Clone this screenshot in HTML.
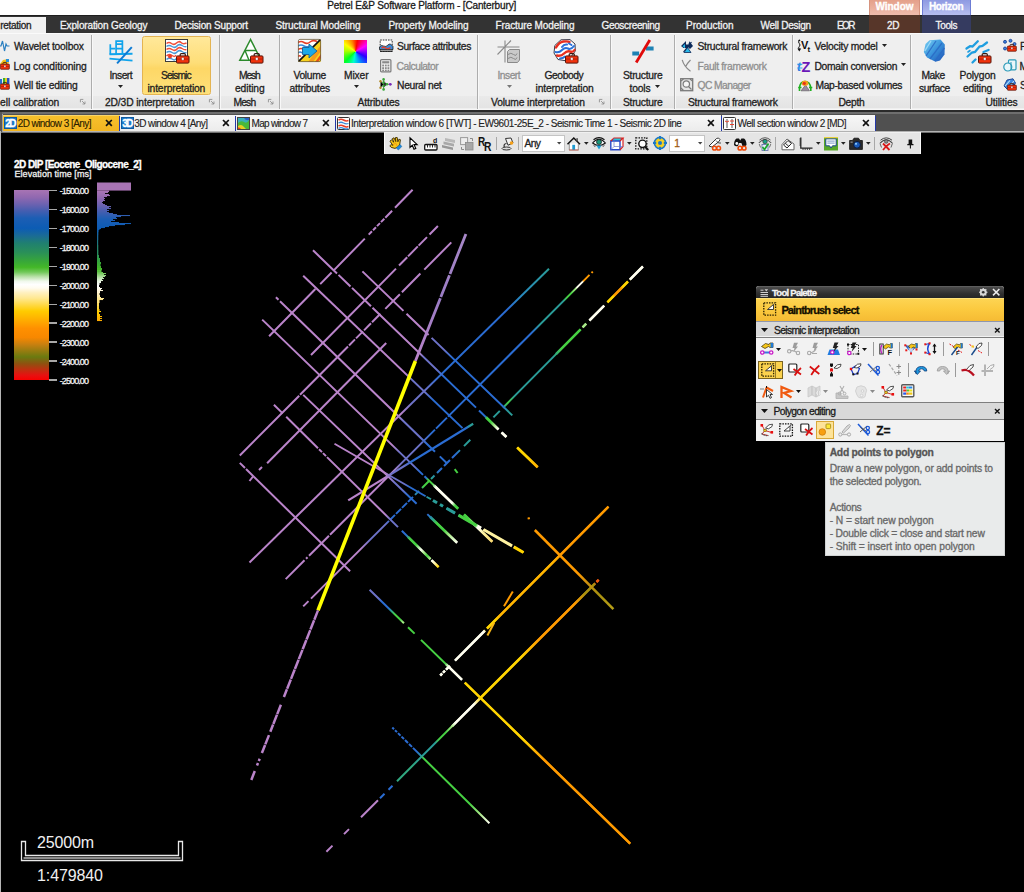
<!DOCTYPE html>
<html>
<head>
<meta charset="utf-8">
<title>Petrel</title>
<style>
*{box-sizing:border-box;margin:0;padding:0}
html,body{width:1024px;height:892px;overflow:hidden;background:#000;font-family:"Liberation Sans",sans-serif;}
body{position:relative}
.abs{position:absolute}
.t{position:absolute;white-space:nowrap;line-height:1;-webkit-text-stroke:0.3px currentColor}
svg{overflow:visible}
</style>
</head>
<body>
<div class="abs" style="left:0px;top:0px;width:1024px;height:15px;background:#fff;"></div>
<div class="t" style="left:327.3px;top:1px;font-size:10px;color:#1a1a1a;letter-spacing:-0.141px;">Petrel E&amp;P Software Platform - [Canterbury]</div>
<div class="abs" style="left:869.2px;top:0px;width:51px;height:15.2px;background:linear-gradient(#e4a08a,#f0bcac);border-left:1px solid #d6937e;border-right:1px solid #d6937e"></div>
<div class="abs" style="left:921.6px;top:0px;width:49.2px;height:15.2px;background:linear-gradient(#8e9ae2,#b6bef0);border-left:1px solid #6c7cd4;border-right:1px solid #6c7cd4"></div>
<div class="t" style="left:875.5px;top:2px;font-size:10px;color:#fff;font-weight:bold;letter-spacing:-0.048px;">Window</div>
<div class="t" style="left:929.0px;top:2px;font-size:10px;color:#fff;font-weight:bold;letter-spacing:-0.454px;">Horizon</div>
<div class="abs" style="left:0px;top:15px;width:1024px;height:18.3px;background:#333333;"></div>
<div class="abs" style="left:0px;top:15px;width:1024px;height:1px;background:#1e1e1e;"></div>
<div class="abs" style="left:0px;top:16.5px;width:45.6px;height:18px;background:#f0f0f0;"></div>
<div class="abs" style="left:869.2px;top:15.2px;width:51px;height:18.1px;background:#573629;"></div>
<div class="abs" style="left:921.6px;top:15.2px;width:49.2px;height:18.1px;background:#353b60;"></div>
<div class="t" style="left:0.2px;top:21px;font-size:10px;color:#222;letter-spacing:-0.294px;">retation</div>
<div class="t" style="left:60.0px;top:21px;font-size:10px;color:#f2f2f2;letter-spacing:-0.143px;">Exploration Geology</div>
<div class="t" style="left:174.5px;top:21px;font-size:10px;color:#f2f2f2;letter-spacing:-0.178px;">Decision Support</div>
<div class="t" style="left:275.5px;top:21px;font-size:10px;color:#f2f2f2;letter-spacing:-0.065px;">Structural Modeling</div>
<div class="t" style="left:388.5px;top:21px;font-size:10px;color:#f2f2f2;letter-spacing:-0.073px;">Property Modeling</div>
<div class="t" style="left:495.5px;top:21px;font-size:10px;color:#f2f2f2;letter-spacing:-0.100px;">Fracture Modeling</div>
<div class="t" style="left:601.5px;top:21px;font-size:10px;color:#f2f2f2;letter-spacing:-0.343px;">Geoscreening</div>
<div class="t" style="left:686.0px;top:21px;font-size:10px;color:#f2f2f2;letter-spacing:-0.035px;">Production</div>
<div class="t" style="left:760.5px;top:21px;font-size:10px;color:#f2f2f2;letter-spacing:-0.268px;">Well Design</div>
<div class="t" style="left:837.0px;top:21px;font-size:10px;color:#f2f2f2;letter-spacing:-1.586px;">EOR</div>
<div class="t" style="left:887.0px;top:21px;font-size:10px;color:#f2f2f2;letter-spacing:-0.285px;">2D</div>
<div class="t" style="left:935.5px;top:21px;font-size:10px;color:#f2f2f2;letter-spacing:-0.337px;">Tools</div>
<div class="abs" style="left:0px;top:34px;width:1024px;height:76px;background:#efefef;"></div>
<div class="abs" style="left:0px;top:95.7px;width:1024px;height:12.8px;background:linear-gradient(#eaeaea,#e4e4e4);"></div>
<div class="abs" style="left:0px;top:108.5px;width:1024px;height:1.9px;background:#f6f6f6;"></div>
<div class="abs" style="left:0px;top:33.3px;width:1024px;height:1.2px;background:#fafafa;"></div>
<div class="abs" style="left:91px;top:35.2px;width:1.1px;height:74.2px;background:#adadad;"></div>
<div class="abs" style="left:92.1px;top:35.2px;width:1px;height:74.2px;background:#f8f8f8;"></div>
<div class="abs" style="left:219px;top:35.2px;width:1.1px;height:74.2px;background:#adadad;"></div>
<div class="abs" style="left:220.1px;top:35.2px;width:1px;height:74.2px;background:#f8f8f8;"></div>
<div class="abs" style="left:279px;top:35.2px;width:1.1px;height:74.2px;background:#adadad;"></div>
<div class="abs" style="left:280.1px;top:35.2px;width:1px;height:74.2px;background:#f8f8f8;"></div>
<div class="abs" style="left:476.5px;top:35.2px;width:1.1px;height:74.2px;background:#adadad;"></div>
<div class="abs" style="left:477.6px;top:35.2px;width:1px;height:74.2px;background:#f8f8f8;"></div>
<div class="abs" style="left:610px;top:35.2px;width:1.1px;height:74.2px;background:#adadad;"></div>
<div class="abs" style="left:611.1px;top:35.2px;width:1px;height:74.2px;background:#f8f8f8;"></div>
<div class="abs" style="left:674px;top:35.2px;width:1.1px;height:74.2px;background:#adadad;"></div>
<div class="abs" style="left:675.1px;top:35.2px;width:1px;height:74.2px;background:#f8f8f8;"></div>
<div class="abs" style="left:792px;top:35.2px;width:1.1px;height:74.2px;background:#adadad;"></div>
<div class="abs" style="left:793.1px;top:35.2px;width:1px;height:74.2px;background:#f8f8f8;"></div>
<div class="abs" style="left:910px;top:35.2px;width:1.1px;height:74.2px;background:#adadad;"></div>
<div class="abs" style="left:911.1px;top:35.2px;width:1px;height:74.2px;background:#f8f8f8;"></div>
<div class="t" style="left:14.0px;top:42px;font-size:10.3px;color:#1e1e1e;letter-spacing:-0.218px;">Wavelet toolbox</div>
<div class="t" style="left:13.5px;top:62px;font-size:10.3px;color:#1e1e1e;letter-spacing:-0.111px;">Log conditioning</div>
<div class="t" style="left:14.0px;top:81px;font-size:10.3px;color:#1e1e1e;letter-spacing:-0.198px;">Well tie editing</div>
<div class="t" style="left:0.0px;top:98px;font-size:10.3px;color:#1e1e1e;letter-spacing:-0.059px;">ell calibration</div>
<svg class="abs" style="left:79.5px;top:99px" width="5.8" height="5.8" viewBox="0 0 7 7"><path d="M.5 4V.5H4" fill="none" stroke="#8a8a8a" stroke-width="1"/><path d="M2.5 2.5L6 6M6 3V6H3" fill="none" stroke="#8a8a8a" stroke-width="1"/></svg>
<svg class="abs" style="left:0px;top:40px" width="10" height="12" viewBox="0 0 10 12"><path d="M-2 6H1L2.5 1L4.5 11L6 4L7 6H9.5" fill="none" stroke="#2a7fc0" stroke-width="1.2"/></svg>
<svg class="abs" style="left:0px;top:58px" width="10" height="8" viewBox="0 0 10 8"><path d="M0 6L3 2L8 1L9 5L4 7Z" fill="#f5c21a"/><rect x="6" y="1" width="3" height="3" fill="#2a8fd8"/></svg>
<svg class="abs" style="left:0.3px;top:62.3px" width="9.72" height="7.56" viewBox="0 0 13.5 10.5"><path d="M4.2 3.2V1.6Q4.2 .6 5.2 .6H8.3Q9.3 .6 9.3 1.6V3.2" fill="none" stroke="#3a1a10" stroke-width="1.2"/><rect x=".5" y="2.9" width="12.5" height="7.2" rx="1" fill="#f0320c" stroke="#5a1408" stroke-width="1"/><rect x=".9" y="5.6" width="11.7" height=".9" fill="#b01a06"/><rect x="5.6" y="4.6" width="2.4" height="2.6" rx=".6" fill="#fff" stroke="#7a1a10" stroke-width=".4"/></svg>
<svg class="abs" style="left:0px;top:77px" width="10" height="8" viewBox="0 0 10 8"><rect x="-1" y="2" width="3" height="5" fill="#2a6fd0"/><rect x="3" y="1" width="2" height="6" fill="#38b030"/><rect x="5" y="1" width="2" height="6" fill="#e8d020"/><rect x="7" y="1" width="2.4" height="6" fill="#2a50c0"/></svg>
<svg class="abs" style="left:0.3px;top:81.8px" width="9.72" height="7.56" viewBox="0 0 13.5 10.5"><path d="M4.2 3.2V1.6Q4.2 .6 5.2 .6H8.3Q9.3 .6 9.3 1.6V3.2" fill="none" stroke="#3a1a10" stroke-width="1.2"/><rect x=".5" y="2.9" width="12.5" height="7.2" rx="1" fill="#f0320c" stroke="#5a1408" stroke-width="1"/><rect x=".9" y="5.6" width="11.7" height=".9" fill="#b01a06"/><rect x="5.6" y="4.6" width="2.4" height="2.6" rx=".6" fill="#fff" stroke="#7a1a10" stroke-width=".4"/></svg>
<svg class="abs" style="left:108.5px;top:38.6px" width="24" height="24" viewBox="0 0 24 24"><g fill="none" stroke="#10a4ec" stroke-width="1.7"><path d="M7.1 1.4V15.4M13.4 1.4V15.4M6.3 2.2H14.2M6.3 5.2H14.2M6.3 9.6H14.2"/><path d="M1.3 5.3V15.6M.5 9.6H6.3"/><path d="M.5 15.3L23.5 14.7" stroke-width="1.9"/><path d="M.5 19.6L23.5 21.6" stroke-width="1.9"/><path d="M8.1 24.3L22.8 8.2" stroke="#0c7ad4" stroke-width="2"/></g></svg>
<div class="t" style="left:109.5px;top:71px;font-size:10.3px;color:#1e1e1e;letter-spacing:-0.527px;">Insert</div>
<svg class="abs" style="left:118px;top:85px" width="5" height="3" viewBox="0 0 5 3"><path d="M0 0H5 L2.5 3Z" fill="#222"/></svg>
<div class="abs" style="left:141.5px;top:36.3px;width:69.5px;height:59px;border:1px solid #e4b452;border-radius:2.5px;background:linear-gradient(#ffe89a,#fede78 45%,#fdd766 55%,#fee07a)"></div>
<svg class="abs" style="left:165px;top:39.3px" width="23" height="23" viewBox="0 0 23 23"><rect x=".5" y=".5" width="22" height="22" fill="#fff" stroke="#3c3c3c" stroke-width="1"/><g fill="none" stroke-width="1.5"><path d="M1.5 4.5Q4 2.5 6.5 4.5T11.5 4T16 3.5T21.5 4" stroke="#f0503a"/><path d="M1.5 7.5Q4 5.5 7 7.5T12 7T17 6.5T21.5 7.5" stroke="#4a9ad8"/><path d="M1.5 10.5Q4 8.5 7 10.5T12 10T17 9.5T21.5 10.5" stroke="#f0503a"/><path d="M1.5 13.5Q4 11.5 7 13.5T12 13T17 12.5T21.5 13.5" stroke="#4a9ad8"/><path d="M1.5 17Q4 14.5 7 16.5T11 16" stroke="#f0503a"/><path d="M1.5 20.5Q4 18 7 20T11 19.5" stroke="#4a9ad8"/></g><circle cx="5" cy="17.5" r="2" fill="#e8402a"/></svg>
<svg class="abs" style="left:176px;top:52.8px" width="13.5" height="10.5" viewBox="0 0 13.5 10.5"><path d="M4.2 3.2V1.6Q4.2 .6 5.2 .6H8.3Q9.3 .6 9.3 1.6V3.2" fill="none" stroke="#3a1a10" stroke-width="1.2"/><rect x=".5" y="2.9" width="12.5" height="7.2" rx="1" fill="#f0320c" stroke="#5a1408" stroke-width="1"/><rect x=".9" y="5.6" width="11.7" height=".9" fill="#b01a06"/><rect x="5.6" y="4.6" width="2.4" height="2.6" rx=".6" fill="#fff" stroke="#7a1a10" stroke-width=".4"/></svg>
<div class="t" style="left:161.0px;top:71px;font-size:10.3px;color:#1e1e1e;letter-spacing:-0.897px;">Seismic</div>
<div class="t" style="left:147.5px;top:84px;font-size:10.3px;color:#1e1e1e;letter-spacing:-0.180px;">interpretation</div>
<div class="t" style="left:105.0px;top:98px;font-size:10.3px;color:#1e1e1e;letter-spacing:-0.144px;">2D/3D interpretation</div>
<svg class="abs" style="left:208.5px;top:99px" width="5.8" height="5.8" viewBox="0 0 7 7"><path d="M.5 4V.5H4" fill="none" stroke="#8a8a8a" stroke-width="1"/><path d="M2.5 2.5L6 6M6 3V6H3" fill="none" stroke="#8a8a8a" stroke-width="1"/></svg>
<svg class="abs" style="left:238px;top:38px" width="25" height="24" viewBox="0 0 25 24"><path d="M12.5 1.5L1.8 22.3H23.2Z" fill="#fff" stroke="#2c8a2c" stroke-width="1.5" stroke-linejoin="miter"/><path d="M7 12.5H18M7 12.5L11 22.3" fill="none" stroke="#2c8a2c" stroke-width="1.4"/></svg>
<svg class="abs" style="left:250.2px;top:52.5px" width="13.5" height="10.5" viewBox="0 0 13.5 10.5"><path d="M4.2 3.2V1.6Q4.2 .6 5.2 .6H8.3Q9.3 .6 9.3 1.6V3.2" fill="none" stroke="#3a1a10" stroke-width="1.2"/><rect x=".5" y="2.9" width="12.5" height="7.2" rx="1" fill="#f0320c" stroke="#5a1408" stroke-width="1"/><rect x=".9" y="5.6" width="11.7" height=".9" fill="#b01a06"/><rect x="5.6" y="4.6" width="2.4" height="2.6" rx=".6" fill="#fff" stroke="#7a1a10" stroke-width=".4"/></svg>
<div class="t" style="left:239.0px;top:71px;font-size:10.3px;color:#1e1e1e;letter-spacing:-1.189px;">Mesh</div>
<div class="t" style="left:235.0px;top:84px;font-size:10.3px;color:#1e1e1e;letter-spacing:-0.118px;">editing</div>
<div class="t" style="left:233.5px;top:98px;font-size:10.3px;color:#1e1e1e;letter-spacing:-0.855px;">Mesh</div>
<svg class="abs" style="left:267.5px;top:99px" width="5.8" height="5.8" viewBox="0 0 7 7"><path d="M.5 4V.5H4" fill="none" stroke="#8a8a8a" stroke-width="1"/><path d="M2.5 2.5L6 6M6 3V6H3" fill="none" stroke="#8a8a8a" stroke-width="1"/></svg>
<svg class="abs" style="left:298.2px;top:39px" width="23" height="23" viewBox="0 0 23 23"><defs><clipPath id="vc"><rect x="0" y="0" width="23" height="23" rx="1.5"/></clipPath></defs><g clip-path="url(#vc)"><rect width="23" height="23" fill="#fff"/><path d="M23 0V23H0Z" fill="#f7d21e"/><path d="M23 6L10 23H15L23 12Z" fill="#f39a1c"/><path d="M23 15L17 23H20L23 19Z" fill="#e8501a"/><g fill="none" stroke-width="1.6"><path d="M0 3.5Q3 1.5 6 3.5T12 3T19 2.5" stroke="#e8402a"/><path d="M0 7Q3 5 6 7T12 6.5" stroke="#3a8ad8"/><path d="M0 10.5Q3 8.5 6 10.5" stroke="#e8402a"/><path d="M0 14Q2 12 4 14" stroke="#3a8ad8"/><path d="M0 17.5Q1.5 16 3 17.5" stroke="#e8402a"/></g><path d="M0 23L23 0" stroke="#111" stroke-width="1.8"/></g><path d="M4.5 8.5H11V5L19 12L11 19V15.5H4.5Z" fill="#1aa8e8" stroke="#14609a" stroke-width=".9"/><rect x=".4" y=".4" width="22.2" height="22.2" rx="1.5" fill="none" stroke="#6a5a3a" stroke-width=".8"/></svg>
<div class="t" style="left:293.5px;top:71px;font-size:10.3px;color:#1e1e1e;letter-spacing:-0.338px;">Volume</div>
<div class="t" style="left:289.5px;top:84px;font-size:10.3px;color:#1e1e1e;letter-spacing:-0.185px;">attributes</div>
<div class="abs" style="left:344.2px;top:39.7px;width:23.2px;height:23.2px;background:conic-gradient(from 10deg,#ff0000,#ff00ff 14%,#2a00ff 30%,#00a0ff 42%,#00ffcc 50%,#00ff20 60%,#a0ff00 72%,#ffff00 82%,#ff8000 92%,#ff0000)"></div>
<div class="t" style="left:344.0px;top:71px;font-size:10.3px;color:#1e1e1e;letter-spacing:-0.139px;">Mixer</div>
<svg class="abs" style="left:353.5px;top:85px" width="5" height="3" viewBox="0 0 5 3"><path d="M0 0H5 L2.5 3Z" fill="#222"/></svg>
<svg class="abs" style="left:379px;top:39px" width="14.5" height="14" viewBox="0 0 14.5 14"><rect x="1.2" y="1" width="12" height="11.5" fill="#fff" stroke="#333" stroke-width="1" stroke-dasharray="1.6 1"/><path d="M.5 8Q2 5.5 4.5 7T9 6T14 7.5V10.5H.5Z" fill="#3a8ad8" stroke="#222" stroke-width=".8"/><path d="M2.5 9Q4.5 7.5 6.5 9T11.5 8.5" fill="none" stroke="#e8402a" stroke-width="1.4"/><path d="M1 12.2H13.5" stroke="#222" stroke-width="1.3"/></svg>
<div class="t" style="left:397.0px;top:42px;font-size:10.3px;color:#1e1e1e;letter-spacing:-0.373px;">Surface attributes</div>
<svg class="abs" style="left:380px;top:58.7px" width="11.5" height="13.5" viewBox="0 0 11.5 13.5"><rect x=".6" y=".6" width="10.3" height="12.3" rx="1" fill="#f4f4f4" stroke="#7a7a7a" stroke-width="1.2"/><rect x="2.2" y="2.2" width="7.1" height="2.2" fill="#8a8a8a"/><g fill="#8a8a8a"><rect x="2.2" y="5.6" width="1.8" height="1.8"/><rect x="4.9" y="5.6" width="1.8" height="1.8"/><rect x="7.5" y="5.6" width="1.8" height="1.8"/><rect x="2.2" y="8.2" width="1.8" height="1.8"/><rect x="4.9" y="8.2" width="1.8" height="1.8"/><rect x="7.5" y="8.2" width="1.8" height="1.8"/><rect x="2.2" y="10.6" width="1.8" height="1.4"/><rect x="4.9" y="10.6" width="1.8" height="1.4"/><rect x="7.5" y="10.6" width="1.8" height="1.4"/></g></svg>
<div class="t" style="left:396.5px;top:62px;font-size:10.3px;color:#8f8f8f;letter-spacing:-0.461px;">Calculator</div>
<svg class="abs" style="left:379px;top:77.5px" width="13" height="13" viewBox="0 0 13 13"><g stroke="#555" stroke-width=".7"><path d="M1.5 3.3L4.6 6.3L1.5 9.7M4.6 1.2V11.6M4.6 6.3H11M4.6 3.5L8 6.3L4.6 9.3"/></g><circle cx="1.5" cy="3.3" r="1.2" fill="#b08a28"/><circle cx="1.5" cy="9.7" r="1.2" fill="#b08a28"/><circle cx="4.6" cy="1.4" r="1.3" fill="#38a838"/><circle cx="4.6" cy="4.6" r="1.3" fill="#38a838"/><circle cx="4.6" cy="8" r="1.3" fill="#38a838"/><circle cx="4.6" cy="11.4" r="1.3" fill="#38a838"/><circle cx="8" cy="6.3" r="1.2" fill="#38a838"/><circle cx="11.3" cy="6.3" r="1.4" fill="#7a2ab8"/></svg>
<div class="t" style="left:397.0px;top:81px;font-size:10.3px;color:#1e1e1e;letter-spacing:-0.311px;">Neural net</div>
<div class="t" style="left:357.5px;top:98px;font-size:10.3px;color:#1e1e1e;letter-spacing:-0.144px;">Attributes</div>
<svg class="abs" style="left:496.5px;top:39.5px" width="24" height="23" viewBox="0 0 24 23"><g fill="none" stroke="#8a8a8a" stroke-width="1.1"><path d="M8 .5V22.5M.5 7H22.5M.5 14.5L14 .5"/></g><path d="M10.5 11.5L12.5 9.5H22.5V20L20.5 22.5H10.5Z" fill="#c9c9c9" stroke="#8a8a8a" stroke-width="1"/><path d="M11 14.5Q14 12 16.5 14.5T20 13.5M11 18.5Q14 16 16.5 18.5T20 17.5" fill="none" stroke="#8a8a8a" stroke-width="1"/></svg>
<div class="t" style="left:497.5px;top:71px;font-size:10.3px;color:#8f8f8f;letter-spacing:-0.527px;">Insert</div>
<svg class="abs" style="left:506.5px;top:85px" width="5" height="3" viewBox="0 0 5 3"><path d="M0 0H5 L2.5 3Z" fill="#777"/></svg>
<svg class="abs" style="left:553px;top:38.7px" width="23" height="23" viewBox="0 0 23 23"><path d="M8 .8L17 .6L22 5L22.3 12L17.5 18.5L13 21.8L5 20.5L1 14L1.8 6.5Z" fill="#fff" stroke="#3a3a4a" stroke-width="1"/><g fill="none" stroke-linecap="round"><path d="M3 8.5Q6 3 10.5 2.5T16.5 3" stroke="#e83020" stroke-width="2.4"/><path d="M9 8Q11 5 14 5.5M16 4.5L18.5 6" stroke="#2a70d8" stroke-width="2"/><path d="M2.5 13Q6 14 9 11T15 9.5T21 7" stroke="#2a70d8" stroke-width="2"/><path d="M4 16.5Q8 17.5 11 14.5T17 12.5T21.5 11" stroke="#e83020" stroke-width="2.4"/><path d="M7 19.5Q10 19.5 12 17.5" stroke="#2a70d8" stroke-width="1.8"/></g></svg>
<svg class="abs" style="left:565px;top:52.5px" width="13.5" height="10.5" viewBox="0 0 13.5 10.5"><path d="M4.2 3.2V1.6Q4.2 .6 5.2 .6H8.3Q9.3 .6 9.3 1.6V3.2" fill="none" stroke="#3a1a10" stroke-width="1.2"/><rect x=".5" y="2.9" width="12.5" height="7.2" rx="1" fill="#f0320c" stroke="#5a1408" stroke-width="1"/><rect x=".9" y="5.6" width="11.7" height=".9" fill="#b01a06"/><rect x="5.6" y="4.6" width="2.4" height="2.6" rx=".6" fill="#fff" stroke="#7a1a10" stroke-width=".4"/></svg>
<div class="t" style="left:544.5px;top:71px;font-size:10.3px;color:#1e1e1e;letter-spacing:-0.434px;">Geobody</div>
<div class="t" style="left:535.5px;top:84px;font-size:10.3px;color:#1e1e1e;letter-spacing:-0.141px;">interpretation</div>
<div class="t" style="left:491.0px;top:98px;font-size:10.3px;color:#1e1e1e;letter-spacing:-0.169px;">Volume interpretation</div>
<svg class="abs" style="left:598.5px;top:99px" width="5.8" height="5.8" viewBox="0 0 7 7"><path d="M.5 4V.5H4" fill="none" stroke="#8a8a8a" stroke-width="1"/><path d="M2.5 2.5L6 6M6 3V6H3" fill="none" stroke="#8a8a8a" stroke-width="1"/></svg>
<svg class="abs" style="left:631px;top:39px" width="24" height="24" viewBox="0 0 24 24"><rect x="1.3" y="12.5" width="6.8" height="4" fill="#1f82b4"/><rect x="15" y="7.5" width="7.6" height="4" fill="#1f82b4"/><path d="M5.2 23.5L18.8 1" stroke="#e00a0a" stroke-width="2.8"/></svg>
<div class="t" style="left:623.0px;top:71px;font-size:10.3px;color:#1e1e1e;letter-spacing:-0.261px;">Structure</div>
<div class="t" style="left:629.5px;top:84px;font-size:10.3px;color:#1e1e1e;letter-spacing:-0.163px;">tools</div>
<svg class="abs" style="left:654.5px;top:84.6px" width="5" height="3" viewBox="0 0 5 3"><path d="M0 0H5 L2.5 3Z" fill="#222"/></svg>
<div class="t" style="left:623.0px;top:98px;font-size:10.3px;color:#1e1e1e;letter-spacing:-0.261px;">Structure</div>
<svg class="abs" style="left:680px;top:39.5px" width="14" height="13" viewBox="0 0 14 13"><path d="M1 6L6 1V4.5H8V8H3.5Z" fill="#0c2a5a"/><path d="M13 6L9.5 1.2L7.5 6.8L10 9Z" fill="#0c2a5a"/><path d="M4 12.5L7.5 7.5L11 12.5Z" fill="#28b8e8" stroke="#0c2a5a" stroke-width=".8"/><path d="M2.5 6.3L5 4V8.3Z" fill="#28b8e8"/><path d="M3.5 12L11.5 2" stroke="#0c2a5a" stroke-width="1.1"/></svg>
<div class="t" style="left:697.5px;top:42px;font-size:10.3px;color:#1e1e1e;letter-spacing:-0.266px;">Structural framework</div>
<svg class="abs" style="left:681px;top:58.5px" width="11" height="13" viewBox="0 0 11 13"><path d="M1.2 .8Q3 7.5 9.5 12.2M9.5 1Q6.5 4 4.6 7.6" fill="none" stroke="#8a8a8a" stroke-width="1.2"/></svg>
<div class="t" style="left:697.5px;top:62px;font-size:10.3px;color:#8f8f8f;letter-spacing:-0.320px;">Fault framework</div>
<svg class="abs" style="left:680px;top:77.8px" width="13.5" height="13.5" viewBox="0 0 13.5 13.5"><rect x=".7" y=".7" width="12" height="12" fill="#e4e4e4" stroke="#7a7a7a" stroke-width="1.3"/><circle cx="6.3" cy="6" r="3.2" fill="#f6f6f6" stroke="#7a7a7a" stroke-width="1.2"/><path d="M8.5 8.5L11.5 11.5M1 3L3.5 1M10 1L12.5 3.2M1 10L3.5 12.5" stroke="#7a7a7a" stroke-width="1.1"/></svg>
<div class="t" style="left:697.5px;top:81px;font-size:10.3px;color:#8f8f8f;letter-spacing:-0.576px;">QC Manager</div>
<div class="t" style="left:688.0px;top:98px;font-size:10.3px;color:#1e1e1e;letter-spacing:-0.266px;">Structural framework</div>
<svg class="abs" style="left:796.5px;top:39px" width="14.5" height="14" viewBox="0 0 14.5 14"><path d="M2.3 1.5Q.8 3 2.3 4.5T2.3 7.5T2.3 10" fill="none" stroke="#111" stroke-width="1"/><path d="M.4 9.5L2.3 12.5L4.2 9.5Z" fill="#111"/><path d="M1 2L2.3 .3L3.6 2" fill="#111"/><text x="4" y="9.5" font-family="Liberation Sans" font-weight="bold" font-size="11" fill="#111">V</text><text x="10.4" y="12.6" font-family="Liberation Sans" font-weight="bold" font-size="8" fill="#111">t</text></svg>
<div class="t" style="left:814.5px;top:42px;font-size:10.3px;color:#1e1e1e;letter-spacing:-0.238px;">Velocity model</div>
<svg class="abs" style="left:882px;top:44.3px" width="5" height="3" viewBox="0 0 5 3"><path d="M0 0H5 L2.5 3Z" fill="#222"/></svg>
<svg class="abs" style="left:796.5px;top:58.5px" width="14.5" height="14" viewBox="0 0 14.5 14"><text x="0" y="11.5" font-family="Liberation Sans" font-weight="bold" font-size="12" fill="#2a7ae0" font-style="italic">t</text><path d="M.3 5.2H5.5M.3 9H5.5" stroke="#2aa0ee" stroke-width="1"/><text x="4.6" y="12.6" font-family="Liberation Sans" font-weight="bold" font-size="14.5" fill="#6a18b8">Z</text></svg>
<div class="t" style="left:814.5px;top:62px;font-size:10.3px;color:#1e1e1e;letter-spacing:-0.328px;">Domain conversion</div>
<svg class="abs" style="left:901px;top:63px" width="5" height="3" viewBox="0 0 5 3"><path d="M0 0H5 L2.5 3Z" fill="#222"/></svg>
<svg class="abs" style="left:797.5px;top:79px" width="14.5" height="13" viewBox="0 0 14.5 13"><path d="M1.5 12V9Q2 2.5 7 2.5T12.8 9V12" fill="none" stroke="#20b020" stroke-width="1.6"/><path d="M.2 8.5H3.5M11 8.5H14.3" stroke="#20b020" stroke-width="1.4"/><path d="M3 11.8L7.5 6L11.5 11.8Z" fill="#9a8aa0" stroke="#555" stroke-width=".6"/><ellipse cx="7" cy="4.2" rx="3.3" ry="2.6" fill="#f2a01a"/><ellipse cx="6.3" cy="4.5" rx="1.6" ry="1.4" fill="#e8301a"/></svg>
<div class="t" style="left:815.5px;top:81px;font-size:10.3px;color:#1e1e1e;letter-spacing:-0.363px;">Map-based volumes</div>
<div class="t" style="left:838.5px;top:98px;font-size:10.3px;color:#1e1e1e;letter-spacing:-0.338px;">Depth</div>
<svg class="abs" style="left:923px;top:38.7px" width="23" height="23.5" viewBox="0 0 23 23.5"><defs><linearGradient id="ms" x1="0" y1="0" x2="1" y2="1"><stop offset="0" stop-color="#7ad0f4"/><stop offset=".5" stop-color="#3a94dc"/><stop offset="1" stop-color="#1c50b4"/></linearGradient></defs><path d="M6.5 1.2L17.5 .6L21.8 5.5L21.5 15.5L17 21.5L12.5 22.8L4 18.5L.8 13L2.5 5Z" fill="url(#ms)"/><g fill="none" stroke="#2a6ac4" stroke-width="1.3" opacity=".85"><path d="M3 17L13 2M7 20L19 4M12 22L21.5 9"/></g><path d="M1.8 12L8 2" stroke="#a8e2fa" stroke-width="1.4" opacity=".8"/></svg>
<div class="t" style="left:921.5px;top:71px;font-size:10.3px;color:#1e1e1e;letter-spacing:-0.522px;">Make</div>
<div class="t" style="left:919.0px;top:84px;font-size:10.3px;color:#1e1e1e;letter-spacing:-0.436px;">surface</div>
<svg class="abs" style="left:965px;top:38.5px" width="26" height="25" viewBox="0 0 26 25"><g fill="none" stroke="#1f9ee0" stroke-width="2.3" stroke-linecap="round"><path d="M1.5 9.5L5 7.2L7.5 7.5L12.8 2.2"/><path d="M2.5 17.5L7 13.5L10 13L14.5 7.5L17.5 7L22 3.5"/><path d="M7.5 23.5L10.5 20.5"/><path d="M18.5 13L23.5 11"/><path d="M3 13L5 11.5" stroke-width="1.6"/></g></svg>
<svg class="abs" style="left:977.8px;top:53px" width="13.5" height="10.5" viewBox="0 0 13.5 10.5"><path d="M4.2 3.2V1.6Q4.2 .6 5.2 .6H8.3Q9.3 .6 9.3 1.6V3.2" fill="none" stroke="#3a1a10" stroke-width="1.2"/><rect x=".5" y="2.9" width="12.5" height="7.2" rx="1" fill="#f0320c" stroke="#5a1408" stroke-width="1"/><rect x=".9" y="5.6" width="11.7" height=".9" fill="#b01a06"/><rect x="5.6" y="4.6" width="2.4" height="2.6" rx=".6" fill="#fff" stroke="#7a1a10" stroke-width=".4"/></svg>
<div class="t" style="left:959.5px;top:71px;font-size:10.3px;color:#1e1e1e;letter-spacing:-0.174px;">Polygon</div>
<div class="t" style="left:963.0px;top:84px;font-size:10.3px;color:#1e1e1e;letter-spacing:-0.201px;">editing</div>
<div class="t" style="left:985.5px;top:98px;font-size:10.3px;color:#1e1e1e;letter-spacing:-0.129px;">Utilities</div>
<svg class="abs" style="left:1002.5px;top:39px" width="14" height="10" viewBox="0 0 14 10"><g fill="#3a80e0" stroke="#143a8a" stroke-width=".8"><circle cx="2" cy="2.8" r="1.5"/><circle cx="7.5" cy="1.8" r="1.5"/><circle cx="11.5" cy="5" r="1.5"/><circle cx="2" cy="9.5" r="1.5"/></g></svg>
<svg class="abs" style="left:1006.5px;top:44.3px" width="9.72" height="7.56" viewBox="0 0 13.5 10.5"><path d="M4.2 3.2V1.6Q4.2 .6 5.2 .6H8.3Q9.3 .6 9.3 1.6V3.2" fill="none" stroke="#3a1a10" stroke-width="1.2"/><rect x=".5" y="2.9" width="12.5" height="7.2" rx="1" fill="#f0320c" stroke="#5a1408" stroke-width="1"/><rect x=".9" y="5.6" width="11.7" height=".9" fill="#b01a06"/><rect x="5.6" y="4.6" width="2.4" height="2.6" rx=".6" fill="#fff" stroke="#7a1a10" stroke-width=".4"/></svg>
<svg class="abs" style="left:1003px;top:59px" width="14" height="13" viewBox="0 0 14 13"><rect x="5.5" y=".8" width="7.5" height="10" rx="1" fill="#e8f6fa" stroke="#2a9ab8" stroke-width="1.2"/><circle cx="4.8" cy="8" r="4" fill="#e8f6fa" stroke="#2a9ab8" stroke-width="1.2"/><path d="M8 3V11" stroke="#2a9ab8" stroke-width="1"/></svg>
<svg class="abs" style="left:1003px;top:78px" width="13" height="12" viewBox="0 0 13 12"><path d="M1 8L4 2L10 .8L12.5 5L9 10L4 11Z" fill="#3a88e0" stroke="#143a8a" stroke-width=".9"/><path d="M2 8L7 2.5M5 10L11 3" stroke="#bfe4fa" stroke-width="1.1"/></svg>
<svg class="abs" style="left:1006.5px;top:83px" width="9.72" height="7.56" viewBox="0 0 13.5 10.5"><path d="M4.2 3.2V1.6Q4.2 .6 5.2 .6H8.3Q9.3 .6 9.3 1.6V3.2" fill="none" stroke="#3a1a10" stroke-width="1.2"/><rect x=".5" y="2.9" width="12.5" height="7.2" rx="1" fill="#f0320c" stroke="#5a1408" stroke-width="1"/><rect x=".9" y="5.6" width="11.7" height=".9" fill="#b01a06"/><rect x="5.6" y="4.6" width="2.4" height="2.6" rx=".6" fill="#fff" stroke="#7a1a10" stroke-width=".4"/></svg>
<div class="t" style="left:1020.0px;top:42px;font-size:10.3px;color:#1e1e1e;">P</div>
<div class="t" style="left:1019.5px;top:62px;font-size:10.3px;color:#1e1e1e;">M</div>
<div class="t" style="left:1020.0px;top:81px;font-size:10.3px;color:#1e1e1e;">S</div>
<div class="abs" style="left:0px;top:110px;width:1024px;height:23px;background:#505050;"></div>
<div class="abs" style="left:0px;top:110.4px;width:1024px;height:1.4px;background:#2a2a2a;"></div>
<div class="abs" style="left:0px;top:111.8px;width:1024px;height:2.2px;background:#6e6e6e;"></div>
<div class="abs" style="left:0px;top:130.9px;width:1024px;height:1.2px;background:#b2b2b2;"></div>
<div class="abs" style="left:0px;top:132.1px;width:1024px;height:0.9px;background:#707070;"></div>
<div class="abs" style="left:2.5px;top:115px;width:117.1px;height:16px;background:linear-gradient(#f6c02c,#f2b521);border-top:1px solid #f9d56b;"></div>
<div class="abs" style="left:119.5px;top:115px;width:116.1px;height:16px;background:linear-gradient(#f7f7f7,#ececec);"></div>
<div class="abs" style="left:235.5px;top:115px;width:99.8px;height:16px;background:linear-gradient(#f7f7f7,#ececec);"></div>
<div class="abs" style="left:335.3px;top:115px;width:386.2px;height:16px;background:linear-gradient(#f7f7f7,#ececec);"></div>
<div class="abs" style="left:721.5px;top:115px;width:153.5px;height:16px;background:linear-gradient(#f7f7f7,#ececec);"></div>
<div class="abs" style="left:119px;top:115.5px;width:1.1px;height:15.5px;background:#2438a8;"></div>
<div class="abs" style="left:235px;top:115.5px;width:1.1px;height:15.5px;background:#2438a8;"></div>
<div class="abs" style="left:334.8px;top:115.5px;width:1.1px;height:15.5px;background:#2438a8;"></div>
<div class="abs" style="left:721px;top:115.5px;width:1.1px;height:15.5px;background:#2438a8;"></div>
<div class="abs" style="left:874.8px;top:115.5px;width:1.1px;height:15.5px;background:#2438a8;"></div>
<div class="abs" style="left:4px;top:116.6px;width:13.3px;height:12.6px;background:#1b78c8;border:1px solid #0e5aa0"></div><div class="t" style="left:5.2px;top:119px;font-size:10px;color:#fff;font-weight:bold;letter-spacing:-1.585px;">2D</div>
<div class="abs" style="left:121px;top:116.6px;width:13.3px;height:12.6px;background:#1b78c8;border:1px solid #0e5aa0"></div><div class="t" style="left:122.2px;top:119px;font-size:10px;color:#fff;font-weight:bold;letter-spacing:-1.585px;">3D</div>
<svg class="abs" style="left:237.3px;top:116.5px" width="13" height="13" viewBox="0 0 13 13"><rect x=".5" y=".5" width="12" height="12" fill="#3ab0b8" stroke="#444" stroke-width="1"/><path d="M1 12L1 6Q4 3 7 5T12 3V12Z" fill="#4ab83a"/><path d="M1 12V9Q4 7 6 9T9 12Z" fill="#e8d020"/><path d="M1 12V10.5Q3 10 4 12Z" fill="#e8401a"/><path d="M7 1H12V3Q9 4 7 1" fill="#2a60c8"/></svg>
<svg class="abs" style="left:337.2px;top:116.5px" width="13" height="13" viewBox="0 0 13 13"><rect x=".5" y=".5" width="12" height="12" rx="1" fill="#fff" stroke="#333" stroke-width="1"/><path d="M1.5 3Q4 1.5 6.5 3T11.5 3.5M1.5 9Q4 7.5 6.5 9T11.5 9.5" fill="none" stroke="#e8402a" stroke-width="1.5"/><path d="M1.5 6Q4 4.5 6.5 6T11.5 6.5M1.5 11.3Q4 10 6.5 11.3T11.5 11.5" fill="none" stroke="#3a8ad8" stroke-width="1.3"/></svg>
<svg class="abs" style="left:723.3px;top:116.5px" width="13" height="13" viewBox="0 0 13 13"><rect x=".5" y=".5" width="12" height="12" rx="1" fill="#fff" stroke="#333" stroke-width="1"/><path d="M4 2V11M9 2V11" stroke="#555" stroke-width="1"/><path d="M2 4Q4 6 6 4M7 7.5H11M7 4H11" stroke="#e8402a" stroke-width="1" fill="none"/></svg>
<div class="t" style="left:17.7px;top:119px;font-size:10px;color:#2a2000;letter-spacing:-0.565px;-webkit-text-stroke:0.12px currentColor;">2D window 3 [Any]</div>
<div class="t" style="left:134.2px;top:119px;font-size:10px;color:#222;letter-spacing:-0.565px;-webkit-text-stroke:0.12px currentColor;">3D window 4 [Any]</div>
<div class="t" style="left:251.5px;top:119px;font-size:10px;color:#222;letter-spacing:-0.676px;-webkit-text-stroke:0.12px currentColor;">Map window 7</div>
<div class="t" style="left:351.0px;top:119px;font-size:10px;color:#222;letter-spacing:-0.467px;-webkit-text-stroke:0.12px currentColor;">Interpretation window 6 [TWT] - EW9601-25E_2 - Seismic Time 1 - Seismic 2D line</div>
<div class="t" style="left:737.5px;top:119px;font-size:10px;color:#222;letter-spacing:-0.524px;-webkit-text-stroke:0.12px currentColor;">Well section window 2 [MD]</div>
<svg class="abs" style="left:104.7px;top:119.2px" width="7.8" height="7.8" viewBox="0 0 7.8 7.8"><path d="M1 1L6.8 6.8M6.8 1L1 6.8" stroke="#111" stroke-width="1.7"/></svg>
<svg class="abs" style="left:221.9px;top:119.2px" width="7.8" height="7.8" viewBox="0 0 7.8 7.8"><path d="M1 1L6.8 6.8M6.8 1L1 6.8" stroke="#111" stroke-width="1.7"/></svg>
<svg class="abs" style="left:321.5px;top:119.2px" width="7.8" height="7.8" viewBox="0 0 7.8 7.8"><path d="M1 1L6.8 6.8M6.8 1L1 6.8" stroke="#111" stroke-width="1.7"/></svg>
<svg class="abs" style="left:706.9px;top:119.2px" width="7.8" height="7.8" viewBox="0 0 7.8 7.8"><path d="M1 1L6.8 6.8M6.8 1L1 6.8" stroke="#111" stroke-width="1.7"/></svg>
<svg class="abs" style="left:861.9px;top:119.2px" width="7.8" height="7.8" viewBox="0 0 7.8 7.8"><path d="M1 1L6.8 6.8M6.8 1L1 6.8" stroke="#111" stroke-width="1.7"/></svg>
<div class="abs" style="left:0px;top:133px;width:1024px;height:759px;background:#000;"></div>
<div class="abs" style="left:0px;top:112px;width:1.8px;height:20px;background:#585858;"></div>
<div class="abs" style="left:1.8px;top:114px;width:1px;height:18px;background:#a0a0a0;"></div>
<div class="abs" style="left:0px;top:131px;width:1.3px;height:761px;background:#b6b6b6;"></div>
<svg class="abs" style="left:0;top:0" width="1024" height="892" viewBox="0 0 1024 892"><path d="M269.1 336.3L315.4 289.0M320.2 284.1L331.6 272.5M333.5 270.6L364.8 238.6M368.7 234.6L372.0 231.2M373.0 230.2L376.0 227.2M377.0 226.1L380.0 223.1M381.0 222.1L384.3 218.7M385.3 217.7L392.1 210.7M395.0 207.8L412.6 189.8" stroke="#ba84ca" stroke-width="2" fill="none"/><path d="M311.0 355.0L396.0 268.6M399.0 265.5L407.2 257.2M408.0 256.4L417.8 246.4M418.6 245.6L427.0 237.1M429.5 234.5L437.9 226.0" stroke="#ba84ca" stroke-width="2" fill="none"/><path d="M239.8 455.5L299.2 395.7M300.0 394.8L348.0 346.5M349.0 345.5L355.0 339.4M356.0 338.4L363.0 331.4M364.0 330.4L371.0 323.3M372.0 322.3L380.4 313.8M385.3 308.9L399.9 294.2M401.9 292.2L420.4 273.5M424.3 269.6L451.3 242.4" stroke="#ba84ca" stroke-width="2" fill="none"/><path d="M267.1 463.3L386.2 343.0" stroke="#ba84ca" stroke-width="2" fill="none"/><path d="M259.0 470.0L262.0 467.0" stroke="#ba84ca" stroke-width="2" fill="none"/><path d="M249.5 481.0L253.4 476.0" stroke="#ba84ca" stroke-width="2" fill="none"/><linearGradient id="g1" gradientUnits="userSpaceOnUse" x1="549.0" y1="268.7" x2="249.5" y2="562.5"><stop offset="0.000" stop-color="#2a9c98"/><stop offset="0.097" stop-color="#2888c0"/><stop offset="0.137" stop-color="#2a6cd2"/><stop offset="0.364" stop-color="#2a6cd2"/><stop offset="0.414" stop-color="#6c72c8"/><stop offset="0.457" stop-color="#6c72c8"/><stop offset="0.497" stop-color="#ba84ca"/><stop offset="1.000" stop-color="#ba84ca"/></linearGradient><path d="M249.5 562.5L549.0 268.7" stroke="url(#g1)" stroke-width="2" fill="none"/><linearGradient id="g2" gradientUnits="userSpaceOnUse" x1="592.8" y1="271.6" x2="285.7" y2="579.1"><stop offset="0.000" stop-color="#ff9a00"/><stop offset="0.029" stop-color="#ff9a00"/><stop offset="0.034" stop-color="#fffff0"/><stop offset="0.051" stop-color="#fffff0"/><stop offset="0.056" stop-color="#a8e888"/><stop offset="0.071" stop-color="#46d042"/><stop offset="0.084" stop-color="#46d042"/><stop offset="0.097" stop-color="#2a9c98"/><stop offset="0.172" stop-color="#2a9c98"/><stop offset="0.198" stop-color="#2a6cd2"/><stop offset="0.524" stop-color="#2a6cd2"/><stop offset="0.563" stop-color="#6c72c8"/><stop offset="0.621" stop-color="#6c72c8"/><stop offset="0.654" stop-color="#ba84ca"/><stop offset="1.000" stop-color="#ba84ca"/></linearGradient><path d="M285.7 579.1L304.5 560.3M306.0 558.8L307.5 557.3M309.0 555.8L329.0 535.7M330.0 534.7L423.0 441.6M424.0 440.6L435.0 429.6M436.0 428.6L447.0 417.6M448.0 416.6L589.5 274.9M591.5 272.9L592.8 271.6" stroke="url(#g2)" stroke-width="2" fill="none"/><linearGradient id="g3" gradientUnits="userSpaceOnUse" x1="642.9" y1="266.5" x2="493.4" y2="417.4"><stop offset="0.000" stop-color="#fffff0"/><stop offset="0.086" stop-color="#fffff0"/><stop offset="0.096" stop-color="#ffd400"/><stop offset="0.133" stop-color="#ffd400"/><stop offset="0.146" stop-color="#ff9a00"/><stop offset="0.187" stop-color="#ff9a00"/><stop offset="0.200" stop-color="#ffd400"/><stop offset="0.237" stop-color="#ffd400"/><stop offset="0.260" stop-color="#fffff0"/><stop offset="0.357" stop-color="#fffff0"/><stop offset="0.364" stop-color="#a8e888"/><stop offset="0.403" stop-color="#a8e888"/><stop offset="0.417" stop-color="#46d042"/><stop offset="0.541" stop-color="#46d042"/><stop offset="0.601" stop-color="#2a9c98"/><stop offset="0.856" stop-color="#2a9c98"/><stop offset="0.902" stop-color="#46d042"/><stop offset="0.936" stop-color="#2a9c98"/><stop offset="1.000" stop-color="#2a9c98"/></linearGradient><path d="M493.4 417.4L499.8 410.9M503.0 407.7L580.6 329.4M582.6 327.4L586.2 323.7M589.4 320.5L604.2 305.6M607.4 302.3L628.0 281.5M629.8 279.7L642.9 266.5" stroke="url(#g3)" stroke-width="2" fill="none"/><path d="M556.0 354.2L580.6 329.4M582.6 327.4L586.2 323.7M589.4 320.5L604.2 305.6M607.4 302.3L628.0 281.5M629.8 279.7L642.9 266.5" stroke="url(#g3)" stroke-width="2.5" fill="none"/><linearGradient id="g4" gradientUnits="userSpaceOnUse" x1="470.3" y1="439.8" x2="303.2" y2="606.4"><stop offset="0.000" stop-color="#2a9c98"/><stop offset="0.050" stop-color="#2a9c98"/><stop offset="0.086" stop-color="#2a6cd2"/><stop offset="0.181" stop-color="#2a6cd2"/><stop offset="0.229" stop-color="#2a9c98"/><stop offset="0.253" stop-color="#46d042"/><stop offset="0.277" stop-color="#46d042"/><stop offset="0.307" stop-color="#2a9c98"/><stop offset="0.349" stop-color="#2a6cd2"/><stop offset="0.469" stop-color="#2a6cd2"/><stop offset="0.510" stop-color="#6c72c8"/><stop offset="0.600" stop-color="#6c72c8"/><stop offset="0.660" stop-color="#ba84ca"/><stop offset="1.000" stop-color="#ba84ca"/></linearGradient><path d="M303.2 606.4L308.5 601.1M311.0 598.6L389.0 520.9M390.0 519.9L395.0 514.9M396.0 513.9L401.0 508.9M402.0 507.9L407.0 502.9M408.0 501.9L413.0 496.9M415.0 494.9L419.0 490.9M422.0 488.0L429.5 480.5M431.0 479.0L434.5 475.5M437.0 473.0L442.0 468.0M444.0 466.0L450.0 460.0M452.0 458.0L460.0 450.1M464.0 446.1L470.3 439.8" stroke="url(#g4)" stroke-width="2" fill="none"/><linearGradient id="g5" gradientUnits="userSpaceOnUse" x1="608.5" y1="506.6" x2="440.2" y2="675.5"><stop offset="0.000" stop-color="#ff9a00"/><stop offset="0.276" stop-color="#ff9a00"/><stop offset="0.336" stop-color="#ffb400"/><stop offset="0.645" stop-color="#ffb400"/><stop offset="0.674" stop-color="#ffd400"/><stop offset="0.722" stop-color="#ffd400"/><stop offset="0.740" stop-color="#fffff0"/><stop offset="1.000" stop-color="#fffff0"/></linearGradient><path d="M440.2 675.5L442.2 673.5M443.0 672.7L445.0 670.7M446.0 669.7L449.8 665.9M455.0 660.6L485.0 630.5M487.0 628.5L608.5 506.6" stroke="url(#g5)" stroke-width="2" fill="none"/><path d="M440.2 675.5L442.2 673.5M443.0 672.7L445.0 670.7M446.0 669.7L449.8 665.9M455.0 660.6L485.0 630.5M487.0 628.5L608.5 506.6" stroke="url(#g5)" stroke-width="2.5" fill="none"/><path d="M504.0 606.2L512.8 591.6" stroke="#ff9a00" stroke-width="2" fill="none"/><path d="M487.4 635.5L494.2 622.8" stroke="#f8b818" stroke-width="2" fill="none"/><linearGradient id="g6" gradientUnits="userSpaceOnUse" x1="598.7" y1="579.8" x2="326.4" y2="851.7"><stop offset="0.000" stop-color="#f05a10"/><stop offset="0.010" stop-color="#f05a10"/><stop offset="0.017" stop-color="#a89010"/><stop offset="0.050" stop-color="#a89010"/><stop offset="0.087" stop-color="#ff9a00"/><stop offset="0.216" stop-color="#ff9a00"/><stop offset="0.289" stop-color="#ffd400"/><stop offset="0.432" stop-color="#ffd400"/><stop offset="0.458" stop-color="#fffff0"/><stop offset="0.528" stop-color="#fffff0"/><stop offset="0.539" stop-color="#a8e888"/><stop offset="0.561" stop-color="#46d042"/><stop offset="0.586" stop-color="#46d042"/><stop offset="0.601" stop-color="#2a9c98"/><stop offset="0.653" stop-color="#2a9c98"/><stop offset="0.686" stop-color="#30a880"/><stop offset="0.741" stop-color="#30a880"/><stop offset="0.755" stop-color="#2a6cd2"/><stop offset="0.803" stop-color="#2a6cd2"/><stop offset="0.811" stop-color="#ba84ca"/><stop offset="1.000" stop-color="#ba84ca"/></linearGradient><path d="M326.4 851.7L332.5 845.6M344.0 834.1L349.0 829.1M361.0 817.2L378.0 800.2M380.0 798.2L384.5 793.7M388.5 789.7L392.5 785.7M397.0 781.2L595.2 583.3M596.5 582.0L598.7 579.8" stroke="url(#g6)" stroke-width="2" fill="none"/><path d="M452.0 726.3L595.2 583.3M596.5 582.0L598.7 579.8" stroke="url(#g6)" stroke-width="2.5" fill="none"/><linearGradient id="g7" gradientUnits="userSpaceOnUse" x1="313.0" y1="250.3" x2="537.7" y2="467.2"><stop offset="0.000" stop-color="#ba84ca"/><stop offset="0.472" stop-color="#ba84ca"/><stop offset="0.494" stop-color="#6c72c8"/><stop offset="0.547" stop-color="#6c72c8"/><stop offset="0.583" stop-color="#2a6cd2"/><stop offset="0.765" stop-color="#2a6cd2"/><stop offset="0.774" stop-color="#46d042"/><stop offset="0.792" stop-color="#46d042"/><stop offset="0.806" stop-color="#a8e888"/><stop offset="0.823" stop-color="#fffff0"/><stop offset="0.859" stop-color="#fffff0"/><stop offset="0.908" stop-color="#ffd400"/><stop offset="0.952" stop-color="#ffd400"/><stop offset="1.000" stop-color="#ffb000"/></linearGradient><path d="M313.0 250.3L337.0 273.5M338.5 274.9L350.5 286.5M352.0 287.9L371.0 306.3M372.5 307.7L476.0 407.6M479.0 410.5L498.5 429.4M501.6 432.4L506.4 437.0M517.2 447.4L537.7 467.2" stroke="url(#g7)" stroke-width="2" fill="none"/><path d="M486.0 417.3L498.5 429.4M501.6 432.4L506.4 437.0M517.2 447.4L537.7 467.2" stroke="url(#g7)" stroke-width="2.8" fill="none"/><linearGradient id="g8" gradientUnits="userSpaceOnUse" x1="303.2" y1="275.7" x2="462.5" y2="428.1"><stop offset="0.000" stop-color="#ba84ca"/><stop offset="0.639" stop-color="#ba84ca"/><stop offset="0.683" stop-color="#6c72c8"/><stop offset="0.765" stop-color="#6c72c8"/><stop offset="0.815" stop-color="#2a6cd2"/><stop offset="1.000" stop-color="#2a6cd2"/></linearGradient><path d="M303.2 275.7L462.5 428.1" stroke="url(#g8)" stroke-width="2" fill="none"/><linearGradient id="g9" gradientUnits="userSpaceOnUse" x1="275.9" y1="297.2" x2="446.9" y2="463.3"><stop offset="0.000" stop-color="#ba84ca"/><stop offset="0.702" stop-color="#ba84ca"/><stop offset="0.749" stop-color="#6c72c8"/><stop offset="0.843" stop-color="#6c72c8"/><stop offset="0.889" stop-color="#2a6cd2"/><stop offset="1.000" stop-color="#2a6cd2"/></linearGradient><path d="M275.9 297.2L278.5 299.7M280.0 301.2L435.0 451.7M439.8 456.4L446.9 463.3" stroke="url(#g9)" stroke-width="2" fill="none"/><path d="M454.7 469.1L457.6 473.0" stroke="#46d042" stroke-width="2" fill="none"/><linearGradient id="g10" gradientUnits="userSpaceOnUse" x1="262.2" y1="319.6" x2="492.3" y2="541.8"><stop offset="0.000" stop-color="#ba84ca"/><stop offset="0.564" stop-color="#ba84ca"/><stop offset="0.599" stop-color="#6c72c8"/><stop offset="0.660" stop-color="#6c72c8"/><stop offset="0.686" stop-color="#2a6cd2"/><stop offset="0.712" stop-color="#2a6cd2"/><stop offset="0.721" stop-color="#46d042"/><stop offset="0.738" stop-color="#46d042"/><stop offset="0.755" stop-color="#fffff0"/><stop offset="0.825" stop-color="#fffff0"/><stop offset="0.838" stop-color="#46d042"/><stop offset="0.894" stop-color="#46d042"/><stop offset="0.916" stop-color="#a8e888"/><stop offset="0.938" stop-color="#fffff0"/><stop offset="0.960" stop-color="#fff2a0"/><stop offset="1.000" stop-color="#f8d870"/></linearGradient><path d="M262.2 319.6L423.0 474.9M424.5 476.3L458.1 508.8M464.0 514.5L492.3 541.8" stroke="url(#g10)" stroke-width="2" fill="none"/><path d="M434.0 485.5L458.1 508.8M464.0 514.5L492.3 541.8" stroke="url(#g10)" stroke-width="2.7" fill="none"/><linearGradient id="g11" gradientUnits="userSpaceOnUse" x1="362.4" y1="271.4" x2="512.3" y2="415.4"><stop offset="0.000" stop-color="#ba84ca"/><stop offset="0.438" stop-color="#ba84ca"/><stop offset="0.471" stop-color="#6c72c8"/><stop offset="0.544" stop-color="#6c72c8"/><stop offset="0.598" stop-color="#2a6cd2"/><stop offset="0.938" stop-color="#2a6cd2"/><stop offset="0.971" stop-color="#2a9c98"/><stop offset="1.000" stop-color="#2a9c98"/></linearGradient><path d="M362.4 271.4L403.5 310.9M406.5 313.8L428.6 335.0M431.6 337.9L512.3 415.4" stroke="url(#g11)" stroke-width="2" fill="none"/><path d="M239.8 462.9L245.0 468.0M246.0 469.0L350.1 571.3" stroke="#ba84ca" stroke-width="2" fill="none"/><linearGradient id="g12" gradientUnits="userSpaceOnUse" x1="273.9" y1="404.7" x2="438.6" y2="567.1"><stop offset="0.000" stop-color="#ba84ca"/><stop offset="0.675" stop-color="#ba84ca"/><stop offset="0.705" stop-color="#6c72c8"/><stop offset="0.753" stop-color="#6c72c8"/><stop offset="0.778" stop-color="#2a6cd2"/><stop offset="0.802" stop-color="#2a6cd2"/><stop offset="0.826" stop-color="#46d042"/><stop offset="0.863" stop-color="#46d042"/><stop offset="0.893" stop-color="#fffff0"/><stop offset="0.911" stop-color="#a8e888"/><stop offset="0.930" stop-color="#46d042"/><stop offset="0.948" stop-color="#a8e888"/><stop offset="0.960" stop-color="#fffff0"/><stop offset="0.978" stop-color="#fff2a0"/><stop offset="1.000" stop-color="#ffd400"/></linearGradient><path d="M273.9 404.7L282.7 413.4M286.2 416.8L318.0 448.2M319.0 449.2L322.0 452.1M323.0 453.1L326.0 456.1M327.0 457.1L398.0 527.1M401.8 530.8L430.5 559.1M431.5 560.1L438.6 567.1" stroke="url(#g12)" stroke-width="2" fill="none"/><path d="M408.0 536.9L430.5 559.1M431.5 560.1L438.6 567.1" stroke="url(#g12)" stroke-width="2.6" fill="none"/><linearGradient id="g13" gradientUnits="userSpaceOnUse" x1="303.2" y1="394.9" x2="457.1" y2="542.7"><stop offset="0.000" stop-color="#ba84ca"/><stop offset="0.551" stop-color="#ba84ca"/><stop offset="0.596" stop-color="#6c72c8"/><stop offset="0.642" stop-color="#6c72c8"/><stop offset="0.681" stop-color="#2a6cd2"/><stop offset="0.811" stop-color="#2a6cd2"/><stop offset="0.837" stop-color="#2a9c98"/><stop offset="0.869" stop-color="#46d042"/><stop offset="0.915" stop-color="#46d042"/><stop offset="0.947" stop-color="#a8e888"/><stop offset="1.000" stop-color="#fffff0"/></linearGradient><path d="M303.2 394.9L416.6 503.8M427.3 514.1L457.1 542.7" stroke="url(#g13)" stroke-width="2" fill="none"/><path d="M430.0 516.7L457.1 542.7" stroke="url(#g13)" stroke-width="2.6" fill="none"/><linearGradient id="g14" gradientUnits="userSpaceOnUse" x1="369.6" y1="589.8" x2="630.2" y2="843.7"><stop offset="0.000" stop-color="#6c72c8"/><stop offset="0.032" stop-color="#6c72c8"/><stop offset="0.048" stop-color="#2a6cd2"/><stop offset="0.071" stop-color="#2a6cd2"/><stop offset="0.082" stop-color="#2a9c98"/><stop offset="0.097" stop-color="#46d042"/><stop offset="0.117" stop-color="#46d042"/><stop offset="0.128" stop-color="#a8e888"/><stop offset="0.144" stop-color="#46d042"/><stop offset="0.289" stop-color="#46d042"/><stop offset="0.303" stop-color="#fffff0"/><stop offset="0.355" stop-color="#fffff0"/><stop offset="0.366" stop-color="#ffd400"/><stop offset="0.585" stop-color="#ffd400"/><stop offset="0.673" stop-color="#ff9a00"/><stop offset="0.999" stop-color="#ff9a00"/></linearGradient><path d="M369.6 589.8L404.0 623.3M408.0 627.2L414.6 633.6M421.0 639.9L462.0 679.8M464.8 682.6L630.2 843.7" stroke="url(#g14)" stroke-width="2" fill="none"/><path d="M446.0 664.2L462.0 679.8M464.8 682.6L630.2 843.7" stroke="url(#g14)" stroke-width="2.5" fill="none"/><linearGradient id="g15" gradientUnits="userSpaceOnUse" x1="392.3" y1="727.5" x2="489.4" y2="823.2"><stop offset="0.000" stop-color="#2a6cd2"/><stop offset="0.254" stop-color="#2a6cd2"/><stop offset="0.296" stop-color="#2a9c98"/><stop offset="0.326" stop-color="#46d042"/><stop offset="0.800" stop-color="#46d042"/><stop offset="0.903" stop-color="#a8e888"/><stop offset="1.000" stop-color="#fffff0"/></linearGradient><path d="M392.3 727.5L394.0 729.2M395.0 730.2L397.0 732.1M398.0 733.1L400.5 735.6M401.5 736.6L404.0 739.0M405.0 740.0L408.0 743.0M409.0 744.0L412.0 746.9M413.0 747.9L489.4 823.2" stroke="url(#g15)" stroke-width="2" fill="none"/><linearGradient id="g16" gradientUnits="userSpaceOnUse" x1="534.8" y1="530.0" x2="613.4" y2="609.1"><stop offset="0.000" stop-color="#ff9a00"/><stop offset="0.550" stop-color="#ff9a00"/><stop offset="0.677" stop-color="#c89010"/><stop offset="0.804" stop-color="#a89010"/><stop offset="1.000" stop-color="#b8a018"/></linearGradient><path d="M534.8 530.0L613.4 609.1" stroke="url(#g16)" stroke-width="2.5" fill="none"/><rect x="527.6" y="517.5" width="1.8" height="1.8" fill="#ff9a00"/><rect x="528" y="517" width="1.6" height="1.6" fill="#ff9a00" transform="translate(0.3,0.5)"/><linearGradient id="g17" gradientUnits="userSpaceOnUse" x1="334.5" y1="443.8" x2="523.5" y2="552.5"><stop offset="0.000" stop-color="#ba84ca"/><stop offset="0.267" stop-color="#ba84ca"/><stop offset="0.304" stop-color="#6c72c8"/><stop offset="0.368" stop-color="#6c72c8"/><stop offset="0.399" stop-color="#2a6cd2"/><stop offset="0.474" stop-color="#2a6cd2"/><stop offset="0.495" stop-color="#2a9c98"/><stop offset="0.643" stop-color="#2a9c98"/><stop offset="0.664" stop-color="#46d042"/><stop offset="0.749" stop-color="#46d042"/><stop offset="0.759" stop-color="#fffff0"/><stop offset="0.775" stop-color="#fffff0"/><stop offset="0.791" stop-color="#fff2a0"/><stop offset="0.939" stop-color="#fff2a0"/><stop offset="0.955" stop-color="#ffd400"/><stop offset="1.000" stop-color="#ffd400"/></linearGradient><path d="M334.5 443.8L425.6 496.2M426.5 496.7L431.0 499.3M433.0 500.5L437.0 502.8M440.0 504.5L443.0 506.2M446.5 508.2L455.0 513.1M458.5 515.1L481.0 528.1M483.5 529.5L512.0 545.9M513.8 546.9L523.5 552.5" stroke="url(#g17)" stroke-width="1.9" fill="none"/><path d="M433.0 500.5L437.0 502.8M440.0 504.5L443.0 506.2M446.5 508.2L455.0 513.1M458.5 515.1L481.0 528.1M483.5 529.5L512.0 545.9M513.8 546.9L523.5 552.5" stroke="url(#g17)" stroke-width="3" fill="none"/><linearGradient id="g18" gradientUnits="userSpaceOnUse" x1="348.2" y1="500.4" x2="473.2" y2="423.8"><stop offset="0.000" stop-color="#ba84ca"/><stop offset="0.294" stop-color="#ba84ca"/><stop offset="0.350" stop-color="#6c72c8"/><stop offset="0.446" stop-color="#6c72c8"/><stop offset="0.510" stop-color="#2a6cd2"/><stop offset="0.942" stop-color="#2a6cd2"/><stop offset="0.974" stop-color="#2a9c98"/><stop offset="1.000" stop-color="#2a9c98"/></linearGradient><path d="M348.2 500.4L473.2 423.8" stroke="url(#g18)" stroke-width="2.2" fill="none"/><linearGradient id="g19" gradientUnits="userSpaceOnUse" x1="465.9" y1="233.9" x2="415.4" y2="361.0"><stop offset="0.000" stop-color="#a888c8"/><stop offset="0.520" stop-color="#9a7cc4"/><stop offset="1.000" stop-color="#ba84ca"/></linearGradient><path d="M465.9 233.9L450.0 274.0M449.5 275.2L440.8 297.0M440.4 298.2L415.4 361.0" stroke="url(#g19)" stroke-width="2.8" fill="none"/><path d="M415.4 361.0L318.0 610.4" stroke="#ffff00" stroke-width="3.6" fill="none"/><path d="M318.0 610.4L283.9 697.0M280.9 704.8L270.3 731.7M269.0 735.1L261.9 753.0M259.7 758.7L258.8 761.0M258.0 763.0L257.0 765.4M254.8 771.0L251.3 780.0" stroke="#ba84ca" stroke-width="2.5" fill="none" stroke-dasharray="10 0.6"/></svg>
<div class="t" style="left:14.0px;top:160px;font-size:10px;color:#fff;font-weight:bold;letter-spacing:-0.562px;">2D DIP [Eocene_Oligocene_2]</div>
<div class="t" style="left:14.5px;top:170px;font-size:9px;color:#f0f0f0;letter-spacing:0.054px;">Elevation time [ms]</div>
<div class="abs" style="left:14px;top:190.4px;width:35px;height:189.7px;background:linear-gradient(#a874b4 0%,#9068b0 3.9%,#6c62b0 7.5%,#4a5eb0 10.5%,#1c5eb4 14.8%,#0c5cb4 20.2%,#1a6a98 23.8%,#208070 28%,#2a9058 32.9%,#38a838 37.7%,#44b828 40.7%,#70c858 43.2%,#b8e0a8 45.6%,#f0f8ec 48%,#ffffff 49.8%,#fffcf0 51.6%,#fff0c0 54%,#ffe890 57%,#ffd840 60.7%,#ffcc00 63.7%,#ffb000 68%,#ff9000 72.8%,#f88800 77.6%,#c88010 81.3%,#947c10 84.9%,#6a7a10 87.9%,#905010 91.5%,#c03010 94.6%,#e81010 97.6%,#f80000 100%);"></div>
<div class="abs" style="left:49px;top:189.7px;width:7.5px;height:1.4px;background:#a8a8a8;"></div>
<div class="t" style="left:59.8px;top:187px;font-size:9px;color:#f4f4f4;letter-spacing:-0.919px;">-1500.00</div>
<div class="abs" style="left:49px;top:208.67px;width:7.5px;height:1.4px;background:#a8a8a8;"></div>
<div class="t" style="left:59.8px;top:206px;font-size:9px;color:#f4f4f4;letter-spacing:-0.919px;">-1600.00</div>
<div class="abs" style="left:49px;top:227.64px;width:7.5px;height:1.4px;background:#a8a8a8;"></div>
<div class="t" style="left:59.8px;top:225px;font-size:9px;color:#f4f4f4;letter-spacing:-0.919px;">-1700.00</div>
<div class="abs" style="left:49px;top:246.61px;width:7.5px;height:1.4px;background:#a8a8a8;"></div>
<div class="t" style="left:59.8px;top:244px;font-size:9px;color:#f4f4f4;letter-spacing:-0.919px;">-1800.00</div>
<div class="abs" style="left:49px;top:265.58px;width:7.5px;height:1.4px;background:#a8a8a8;"></div>
<div class="t" style="left:59.8px;top:263px;font-size:9px;color:#f4f4f4;letter-spacing:-0.919px;">-1900.00</div>
<div class="abs" style="left:49px;top:284.55px;width:7.5px;height:1.4px;background:#a8a8a8;"></div>
<div class="t" style="left:59.8px;top:282px;font-size:9px;color:#f4f4f4;letter-spacing:-0.919px;">-2000.00</div>
<div class="abs" style="left:49px;top:303.52px;width:7.5px;height:1.4px;background:#a8a8a8;"></div>
<div class="t" style="left:59.8px;top:301px;font-size:9px;color:#f4f4f4;letter-spacing:-0.919px;">-2100.00</div>
<div class="abs" style="left:49px;top:322.49px;width:7.5px;height:1.4px;background:#a8a8a8;"></div>
<div class="t" style="left:59.8px;top:320px;font-size:9px;color:#f4f4f4;letter-spacing:-0.919px;">-2200.00</div>
<div class="abs" style="left:49px;top:341.46px;width:7.5px;height:1.4px;background:#a8a8a8;"></div>
<div class="t" style="left:59.8px;top:339px;font-size:9px;color:#f4f4f4;letter-spacing:-0.919px;">-2300.00</div>
<div class="abs" style="left:49px;top:360.43px;width:7.5px;height:1.4px;background:#a8a8a8;"></div>
<div class="t" style="left:59.8px;top:358px;font-size:9px;color:#f4f4f4;letter-spacing:-0.919px;">-2400.00</div>
<div class="abs" style="left:49px;top:379.4px;width:7.5px;height:1.4px;background:#a8a8a8;"></div>
<div class="t" style="left:59.8px;top:377px;font-size:9px;color:#f4f4f4;letter-spacing:-0.919px;">-2500.00</div>
<svg class="abs" style="left:97.4px;top:182px" width="36" height="140" viewBox="0 0 36 140"><rect x="0" y="0.5" width="34" height="1.55" fill="#a874b4"/><rect x="0" y="2" width="34" height="2.05" fill="#a874b4"/><rect x="0" y="4" width="34" height="2.05" fill="#a874b4"/><rect x="0" y="6" width="34" height="2.05" fill="#a874b4"/><rect x="0" y="8" width="34" height="0.55" fill="#a874b4"/><rect x="0" y="8.5" width="12" height="1.55" fill="#a773b3"/><rect x="0" y="10" width="11" height="1.05" fill="#a271b3"/><rect x="0" y="11" width="8" height="1.05" fill="#9f6fb2"/><rect x="0" y="12" width="12" height="1.05" fill="#9c6eb2"/><rect x="0" y="13" width="13" height="1.05" fill="#996cb1"/><rect x="0" y="14" width="10" height="1.05" fill="#956ab0"/><rect x="0" y="15" width="7" height="1.05" fill="#9269b0"/><rect x="0" y="16" width="8" height="1.05" fill="#8e67b0"/><rect x="0" y="17" width="7" height="1.05" fill="#8966b0"/><rect x="0" y="18" width="8" height="1.05" fill="#8466b0"/><rect x="0" y="19" width="6" height="1.05" fill="#7f65b0"/><rect x="0" y="20" width="5" height="1.05" fill="#7964b0"/><rect x="0" y="21" width="6" height="1.05" fill="#7463b0"/><rect x="0" y="22" width="8" height="1.05" fill="#6f62b0"/><rect x="0" y="23" width="10" height="1.05" fill="#6961b0"/><rect x="0" y="24" width="14" height="1.05" fill="#6361b0"/><rect x="0" y="25" width="12" height="1.05" fill="#5d60b0"/><rect x="0" y="26" width="14" height="1.05" fill="#575fb0"/><rect x="0" y="27" width="10" height="1.05" fill="#515eb0"/><rect x="0" y="28" width="12" height="1.05" fill="#4b5eb0"/><rect x="0" y="29" width="10" height="1.05" fill="#465eb0"/><rect x="0" y="30" width="12" height="1.05" fill="#405eb0"/><rect x="0" y="31" width="16" height="1.05" fill="#3a5eb1"/><rect x="0" y="32" width="20" height="1.05" fill="#355eb1"/><rect x="0" y="33" width="33" height="1.05" fill="#2f5eb2"/><rect x="0" y="34" width="24" height="1.05" fill="#295eb2"/><rect x="0" y="35" width="19" height="1.05" fill="#245eb3"/><rect x="0" y="36" width="20" height="1.05" fill="#1e5eb3"/><rect x="0" y="37" width="16" height="1.05" fill="#1b5db4"/><rect x="0" y="38" width="18" height="1.05" fill="#195db4"/><rect x="0" y="39" width="14" height="1.05" fill="#185db4"/><rect x="0" y="40" width="22" height="1.05" fill="#165db4"/><rect x="0" y="41" width="34" height="1.05" fill="#145db4"/><rect x="0" y="42" width="28" height="1.05" fill="#135cb4"/><rect x="0" y="43" width="18" height="1.05" fill="#115cb4"/><rect x="0" y="44" width="12" height="1.05" fill="#105cb4"/><rect x="0" y="45" width="8" height="1.05" fill="#0e5cb4"/><rect x="0" y="46" width="4" height="1.05" fill="#0d5cb4"/><rect x="0" y="47" width="2.5" height="1.05" fill="#0c5cb2"/><rect x="0" y="48" width="1.6" height="2.05" fill="#0e5eae"/><rect x="0" y="50" width="1.4" height="3.05" fill="#1262a6"/><rect x="0" y="53" width="1.3" height="5.05" fill="#18689a"/><rect x="0" y="58" width="1.2" height="5.05" fill="#1d7681"/><rect x="0" y="63" width="1.3" height="5.05" fill="#21826c"/><rect x="0" y="68" width="1.4" height="5.05" fill="#268b5f"/><rect x="0" y="73" width="2" height="3.05" fill="#2d9550"/><rect x="0" y="76" width="3" height="2.05" fill="#319d45"/><rect x="0" y="78" width="3" height="2.05" fill="#35a23e"/><rect x="0" y="80" width="4" height="2.05" fill="#38a837"/><rect x="0" y="82" width="3.5" height="2.05" fill="#3cad32"/><rect x="0" y="84" width="4" height="2.05" fill="#40b32c"/><rect x="0" y="86" width="5" height="2.05" fill="#47b92b"/><rect x="0" y="88" width="4.5" height="2.05" fill="#5ac040"/><rect x="0" y="90" width="6" height="1.05" fill="#6cc654"/><rect x="0" y="91" width="9" height="1.05" fill="#7acb63"/><rect x="0" y="92" width="7" height="1.05" fill="#8ad074"/><rect x="0" y="93" width="9" height="1.05" fill="#99d586"/><rect x="0" y="94" width="8" height="1.05" fill="#a9db98"/><rect x="0" y="95" width="6" height="1.05" fill="#b9e0a9"/><rect x="0" y="96" width="7" height="1.05" fill="#c5e5b8"/><rect x="0" y="97" width="5" height="1.05" fill="#d1ebc7"/><rect x="0" y="98" width="6" height="1.05" fill="#def0d6"/><rect x="0" y="99" width="4" height="2.05" fill="#eaf5e5"/><rect x="0" y="101" width="2.5" height="2.05" fill="#f6fbf4"/><rect x="0" y="103" width="2" height="2.05" fill="#fffefe"/><rect x="0" y="105" width="3" height="1.05" fill="#fffdf5"/><rect x="0" y="106" width="5" height="1.05" fill="#fffcf1"/><rect x="0" y="107" width="4" height="1.05" fill="#fffae8"/><rect x="0" y="108" width="6" height="1.05" fill="#fff7dd"/><rect x="0" y="109" width="3" height="2.05" fill="#fff4d3"/><rect x="0" y="111" width="2.5" height="2.05" fill="#ffefbe"/><rect x="0" y="113" width="3" height="2.05" fill="#ffecad"/><rect x="0" y="115" width="4" height="1.05" fill="#ffea9c"/><rect x="0" y="116" width="7" height="1.05" fill="#ffe894"/><rect x="0" y="117" width="6" height="1.05" fill="#ffe68a"/><rect x="0" y="118" width="2.5" height="3.05" fill="#ffe47f"/><rect x="0" y="121" width="2" height="3.05" fill="#ffdd5d"/><rect x="0" y="124" width="2" height="3.05" fill="#ffd73a"/><rect x="0" y="127" width="2.5" height="2.05" fill="#ffd019"/><rect x="0" y="129" width="4" height="1.05" fill="#ffcc02"/><rect x="0" y="130" width="2" height="2.05" fill="#ffc900"/><rect x="0" y="132" width="3" height="2.05" fill="#ffc200"/><rect x="0" y="134" width="5" height="1.05" fill="#ffbb00"/><rect x="0" y="135" width="3" height="1.05" fill="#ffb800"/><rect x="0" y="136" width="5" height="1.05" fill="#ffb400"/><rect x="0" y="137" width="3" height="1.05" fill="#ffb100"/><rect x="0" y="138" width="5" height="1.05" fill="#ffad00"/></svg>
<div class="abs" style="left:384.4px;top:132px;width:537px;height:21.8px;background:#e5e5e5;border-left:1.5px solid #fafafa;border-right:1.2px solid #fafafa;border-top:1px solid #f0f0f0"></div>
<div class="abs" style="left:495.5px;top:137px;width:1px;height:13px;background:#a8a8a8;"></div>
<div class="abs" style="left:518px;top:137px;width:1px;height:13px;background:#a8a8a8;"></div>
<div class="abs" style="left:775.3px;top:137px;width:1px;height:13px;background:#a8a8a8;"></div>
<div class="abs" style="left:874.3px;top:137px;width:1px;height:13px;background:#a8a8a8;"></div>
<svg class="abs" style="left:389px;top:136.5px" width="13.5" height="13.5" viewBox="0 0 13.5 13.5"><path d="M1 4.2L2.3 2.8L4.8 5.2L3.3 1.6L5 .8L6.8 4.6L6.4 .6L8.2 .5L8.9 4.8L9.9 2.2L11.4 2.7L10.8 7L9.6 9.6L6 11.4L2.2 10.4L.8 8.8L2.2 7.6L3.8 8.4Z" fill="#f7c81a" stroke="#3a2a00" stroke-width=".9"/><path d="M4 8L6.5 6L8.5 9.5" fill="none" stroke="#f09a10" stroke-width="1"/><path d="M7.2 10.8L11.2 7.4L12.8 9.6L9.3 13Z" fill="#1f8ad8" stroke="#0c5aa0" stroke-width=".5"/></svg>
<svg class="abs" style="left:408.5px;top:136.5px" width="9" height="13" viewBox="0 0 9 13"><path d="M1 .8V10.5L3.3 8.2L5 12.2L6.8 11.4L5 7.6H8.2Z" fill="#fff" stroke="#000" stroke-width="1.1"/></svg>
<svg class="abs" style="left:424px;top:137.6px" width="14" height="13" viewBox="0 0 14 13"><rect x=".7" y="6.5" width="12.3" height="5.5" rx="1" fill="#fff" stroke="#111" stroke-width="1.3"/><path d="M3.5 7V9.5M6 7V9.5M8.5 7V9.5M11 7V9.5" stroke="#111" stroke-width=".9"/><text x="9" y="5.2" font-family="Liberation Sans" font-weight="bold" font-size="7" fill="#111">d</text></svg>
<svg class="abs" style="left:442px;top:137px" width="13.5" height="13" viewBox="0 0 13.5 13"><path d="M3 1L13 3V6L3 4Z" fill="#b8b8b8"/><path d="M1.5 4.5L12 6.8V9.5L1.5 7.2Z" fill="#a8a8a8"/><path d="M0 8L11 10.5V13L0 10.5Z" fill="#989898"/></svg>
<svg class="abs" style="left:460px;top:136.5px" width="13.5" height="13.5" viewBox="0 0 13.5 13.5"><rect x=".6" y=".6" width="7" height="7" fill="#eee" stroke="#9a9a9a" stroke-width="1"/><rect x="5.5" y="5.5" width="7.5" height="7.5" fill="#a8a8a8" stroke="#8a8a8a" stroke-width=".8"/><path d="M10 1.5H12.5V4M1.5 10V12.5H4" stroke="#8a8a8a" stroke-width="1" fill="none"/></svg>
<svg class="abs" style="left:477.5px;top:136.5px" width="13.5" height="14" viewBox="0 0 13.5 14"><text x="0" y="9" font-family="Liberation Sans" font-weight="bold" font-size="12" fill="#111" textLength="7.2" lengthAdjust="spacingAndGlyphs">R</text><text x="6" y="13.6" font-family="Liberation Sans" font-weight="bold" font-size="12" fill="#111" textLength="7.4" lengthAdjust="spacingAndGlyphs">R</text></svg>
<svg class="abs" style="left:501px;top:136.5px" width="13" height="13.5" viewBox="0 0 13 13.5"><path d="M4.5 1.5L10 1L12 6L7 8.2Z" fill="#f2f2f2" stroke="#333" stroke-width="1"/><circle cx="10.5" cy="6" r="1.8" fill="#f5a018"/><path d="M5.5 6.5Q2 7 3.5 10.5" fill="none" stroke="#333" stroke-width="1.2"/><ellipse cx="5.5" cy="11.5" rx="4.5" ry="1.5" fill="#ddd" stroke="#333" stroke-width="1"/></svg>
<div class="abs" style="left:521.5px;top:134.7px;width:43px;height:17px;background:#fff;border:1px solid #c4c4c4"></div>
<div class="t" style="left:524.4px;top:139px;font-size:10.3px;color:#222;letter-spacing:-0.631px;">Any</div>
<svg class="abs" style="left:557.3px;top:142px" width="4.4" height="2.6" viewBox="0 0 4.4 2.6"><path d="M0 0H4.4 L2.2 2.6Z" fill="#444"/></svg>
<svg class="abs" style="left:567.3px;top:136.5px" width="13.5" height="13.5" viewBox="0 0 13.5 13.5"><path d="M2.3 6.5V13H11.3V6.5" fill="#fff" stroke="#8a8a8a" stroke-width=".9"/><path d="M.5 7.2L6.8 1L13 7.2" fill="none" stroke="#111" stroke-width="1.5"/><rect x="9.3" y="1.2" width="1.6" height="3" fill="#555"/><rect x="5.3" y="7.8" width="2.8" height="5.2" fill="#1e9ad0"/><path d="M2 13H11.6" stroke="#d85a4a" stroke-width=".8"/></svg>
<svg class="abs" style="left:584px;top:142px" width="4.6" height="2.8" viewBox="0 0 4.6 2.8"><path d="M0 0H4.6 L2.3 2.8Z" fill="#222"/></svg>
<svg class="abs" style="left:592.3px;top:137px" width="14" height="13" viewBox="0 0 14 13"><path d="M.6 6Q7 -1.5 13.4 6Q7 11 .6 6Z" fill="#fff" stroke="#111" stroke-width="1.1"/><circle cx="7" cy="5" r="2.5" fill="#1a9a7a" stroke="#111" stroke-width=".7"/><path d="M1.5 2.8Q7 -1.5 12.5 2.8" fill="none" stroke="#111" stroke-width="1.1"/><path d="M4.5 8.6H9.5L7 12.6Z" fill="#1aa0d8"/><path d="M1.5 7.8L3.2 10M12.5 7.8L10.8 10" stroke="#444" stroke-width=".8"/></svg>
<svg class="abs" style="left:609.8px;top:136.6px" width="14" height="13.5" viewBox="0 0 14 13.5"><path d="M.8 4L4 1H13V9.5L10 12.8H.8Z" fill="#fff"/><path d="M.8 4L4 1H13L10 4Z" fill="#28c8d8"/><path d="M.8 4H10V12.8H.8Z" fill="none" stroke="#2848c8" stroke-width="1.4"/><path d="M.8 4L4 1H13L10 4" fill="none" stroke="#d82020" stroke-width="1.2"/><path d="M13 1V9.5L10 12.8" fill="none" stroke="#d82020" stroke-width="1.2"/><path d="M4 1V9.5H13M4 9.5L.8 12.8" fill="none" stroke="#6878c8" stroke-width=".7"/></svg>
<svg class="abs" style="left:627.4px;top:142px" width="4.6" height="2.8" viewBox="0 0 4.6 2.8"><path d="M0 0H4.6 L2.3 2.8Z" fill="#222"/></svg>
<svg class="abs" style="left:635px;top:136.5px" width="14" height="14" viewBox="0 0 14 14"><rect x=".8" y=".8" width="11" height="11" fill="none" stroke="#111" stroke-width="1.3" stroke-dasharray="1.5 1.2"/><circle cx="7.5" cy="6.8" r="3.7" fill="#fff" stroke="#111" stroke-width="1.4"/><path d="M10.2 9.8L13.3 13" stroke="#111" stroke-width="1.8"/></svg>
<svg class="abs" style="left:653px;top:136.4px" width="14" height="14" viewBox="0 0 14 14"><circle cx="7" cy="7" r="5.6" fill="#f5d020" stroke="#1a78c8" stroke-width="1.6"/><circle cx="7" cy="7" r="2" fill="#1a78c8"/><path d="M7 0V3.2M7 10.8V14M0 7H3.2M10.8 7H14" stroke="#1a78c8" stroke-width="2"/></svg>
<div class="abs" style="left:669.3px;top:134.7px;width:36px;height:17px;background:#fff;border:1px solid #c4c4c4"></div>
<div class="t" style="left:674.3px;top:139px;font-size:10.3px;color:#a05a10;">1</div>
<svg class="abs" style="left:698px;top:142px" width="4.4" height="2.6" viewBox="0 0 4.4 2.6"><path d="M0 0H4.4 L2.2 2.6Z" fill="#444"/></svg>
<svg class="abs" style="left:708.2px;top:136.5px" width="14" height="14" viewBox="0 0 14 14"><path d="M1 9L8.5 1.5L10.5 1L12 2.5L11 4.5L4 10Z" fill="#fff" stroke="#222" stroke-width=".9"/><path d="M8 3.5L10.5 6H13" stroke="#222" stroke-width=".8" fill="none"/><circle cx="6.5" cy="11.2" r="1.9" fill="none" stroke="#f04a08" stroke-width="1.5"/><circle cx="10.6" cy="11.2" r="1.9" fill="none" stroke="#f04a08" stroke-width="1.5"/></svg>
<svg class="abs" style="left:724.6px;top:142px" width="4.6" height="2.8" viewBox="0 0 4.6 2.8"><path d="M0 0H4.6 L2.3 2.8Z" fill="#222"/></svg>
<svg class="abs" style="left:732.8px;top:136.5px" width="14.5" height="14" viewBox="0 0 14.5 14"><path d="M1 8Q1 3 3.5 1.5H6L7.2 3.5L8.4 1.5H11Q13.5 3 13.5 8Q12 10 9.5 9L8.4 6H6L5 9Q2.5 10 1 8Z" fill="#111"/><circle cx="3.8" cy="6.5" r="1.4" fill="#fff"/><circle cx="7" cy="11.2" r="1.9" fill="none" stroke="#f04a08" stroke-width="1.5"/><circle cx="11.1" cy="11.2" r="1.9" fill="none" stroke="#f04a08" stroke-width="1.5"/></svg>
<svg class="abs" style="left:749.9px;top:142px" width="4.6" height="2.8" viewBox="0 0 4.6 2.8"><path d="M0 0H4.6 L2.3 2.8Z" fill="#222"/></svg>
<svg class="abs" style="left:758px;top:136.6px" width="14" height="14" viewBox="0 0 14 14"><path d="M.8 6Q7 -1 13.2 6" fill="none" stroke="#555" stroke-width="1.1"/><path d="M1.5 3Q7 -1.5 12.5 3" fill="none" stroke="#555" stroke-width="1"/><circle cx="7" cy="4.6" r="2.2" fill="#1aa088" stroke="#333" stroke-width=".7"/><rect x="4" y="7.5" width="6" height="6" fill="#e4ecf8" stroke="#5a6aa8" stroke-width=".8"/><path d="M4.5 10L6.5 12.5L10.5 6.5" fill="none" stroke="#18a828" stroke-width="1.7"/><path d="M1.2 7L2.6 10.5M12.8 7L11.4 10.5" stroke="#555" stroke-width=".8"/></svg>
<svg class="abs" style="left:780.5px;top:137.5px" width="14" height="12.5" viewBox="0 0 14 12.5"><path d="M1 6.5L6 1L13 6V11.8H1Z" fill="#fff" stroke="#666" stroke-width="1"/><path d="M2.5 7L7 2.5L10.5 5.5L6 10Z" fill="#f4f4f4" stroke="#222" stroke-width="1"/><path d="M4.3 5.3L7.8 8.3" stroke="#222" stroke-width=".9"/></svg>
<svg class="abs" style="left:798.7px;top:137px" width="14" height="13.5" viewBox="0 0 14 13.5"><path d="M1.8 .5V11.2H13.5" fill="none" stroke="#222" stroke-width="1.3"/><path d="M.3 2H1.8M.3 4H1.8M.3 6H1.8M.3 8H1.8M4 11.2V13M6.2 11.2V13M8.4 11.2V13M10.6 11.2V13" stroke="#222" stroke-width=".8"/></svg>
<svg class="abs" style="left:815.7px;top:142px" width="4.6" height="2.8" viewBox="0 0 4.6 2.8"><path d="M0 0H4.6 L2.3 2.8Z" fill="#222"/></svg>
<svg class="abs" style="left:823.8px;top:136.5px" width="14" height="13.5" viewBox="0 0 14 13.5"><rect x="0" y="0" width="14" height="13.5" fill="#58a828"/><path d="M1.8 1.8H12.2V8.8H8.5L7 11L5.5 8.8H1.8Z" fill="#fff" stroke="#1a4a8a" stroke-width="1"/><rect x="3.3" y="3.6" width="7.4" height="1" fill="#7a9ac8"/><rect x="3.3" y="5.6" width="7.4" height="1" fill="#7a9ac8"/><rect x="0" y="0" width="14" height="1.2" fill="#e8d040"/></svg>
<svg class="abs" style="left:840.8px;top:142px" width="4.6" height="2.8" viewBox="0 0 4.6 2.8"><path d="M0 0H4.6 L2.3 2.8Z" fill="#222"/></svg>
<svg class="abs" style="left:848.8px;top:137px" width="14" height="13" viewBox="0 0 14 13"><path d="M.6 3.5H3.5L5 1.2H9.5L11 3.5H13.4V12.4H.6Z" fill="#2a2a2a" stroke="#111" stroke-width=".8"/><circle cx="8" cy="7.8" r="3.4" fill="#1a5ab8" stroke="#0a1a3a" stroke-width="1"/><circle cx="7" cy="6.8" r="1.1" fill="#8ac8f8"/><rect x="1.5" y="4.5" width="2.2" height="1.3" fill="#888"/></svg>
<svg class="abs" style="left:866.1px;top:142px" width="4.6" height="2.8" viewBox="0 0 4.6 2.8"><path d="M0 0H4.6 L2.3 2.8Z" fill="#222"/></svg>
<svg class="abs" style="left:878.7px;top:136.6px" width="14.5" height="14" viewBox="0 0 14.5 14"><path d="M.8 6.5Q7.2 -1 13.7 6.5" fill="none" stroke="#444" stroke-width="1.1"/><path d="M1.5 3.2Q7.2 -1.5 13 3.2" fill="none" stroke="#444" stroke-width="1"/><circle cx="7.2" cy="4.5" r="1.8" fill="#888" stroke="#333" stroke-width=".6"/><path d="M4 6.5Q6 8.5 10.5 13M11 6.5Q8 8 4 13" fill="none" stroke="#d81818" stroke-width="1.8"/><path d="M1.2 7L2.5 10.5M13.2 7L12 10.5" stroke="#444" stroke-width=".8"/></svg>
<svg class="abs" style="left:906.5px;top:138.8px" width="7" height="10" viewBox="0 0 7 10"><rect x="1.6" y=".5" width="3.6" height="5" fill="#111"/><path d="M.3 5.6H6.5" stroke="#111" stroke-width="1.3"/><path d="M3.4 6V9.6" stroke="#111" stroke-width="1.1"/></svg>
<div class="abs" style="left:756.4px;top:286px;width:247.9px;height:154.5px;background:#f2f2f2;border-radius:3px 3px 0 0"></div>
<div class="abs" style="left:756.4px;top:286px;width:247.9px;height:12px;background:linear-gradient(#4c4c4c,#303030 60%,#262626);border-radius:3px 3px 0 0;border-top:1px solid #5e5e5e"></div>
<svg class="abs" style="left:760px;top:288.5px" width="9" height="8" viewBox="0 0 9 8"><path d="M.5 1.2H3.5M.5 3.5H8M.5 5.5H8M.5 7.3H8" stroke="#cfcfcf" stroke-width="1"/><path d="M4.5 .3H8.2L6.3 2.4Z" fill="#cfcfcf"/></svg>
<div class="t" style="left:772.0px;top:288px;font-size:9.5px;color:#f4f4f4;font-weight:bold;letter-spacing:-0.739px;">Tool Palette</div>
<svg class="abs" style="left:979px;top:288px" width="8.5" height="8.5" viewBox="0 0 8.5 8.5"><circle cx="4.25" cy="4.25" r="2.6" fill="none" stroke="#d8d8d8" stroke-width="1.8"/><path d="M4.25 0V8.5M0 4.25H8.5M1.2 1.2L7.3 7.3M7.3 1.2L1.2 7.3" stroke="#d8d8d8" stroke-width="1.2"/><circle cx="4.25" cy="4.25" r="1.3" fill="#2e2e2e"/></svg>
<svg class="abs" style="left:992.4px;top:288px" width="8.4" height="8.4" viewBox="0 0 8.4 8.4"><path d="M1 1L7.4 7.4M7.4 1L1 7.4" stroke="#ececec" stroke-width="1.5"/></svg>
<div class="abs" style="left:756.4px;top:298px;width:247.9px;height:22.5px;background:linear-gradient(#fdd452,#fbc93e 50%,#f5bb34);border-top:1px solid #ffe27a"></div>
<svg class="abs" style="left:763px;top:302px" width="13.5" height="14" viewBox="0 0 13.5 14"><rect x=".8" y=".8" width="11.8" height="12.4" fill="none" stroke="#2a2000" stroke-width="1.3" stroke-dasharray="1.5 1.1"/><path d="M4.5 7.5L10.5 2.5V7.5Z" fill="#fff" stroke="#2a2a2a" stroke-width=".9"/><path d="M9 3.8L11.5 1.8" stroke="#555" stroke-width="1"/></svg>
<div class="t" style="left:781.4px;top:305px;font-size:11px;color:#141000;font-weight:bold;letter-spacing:-0.862px;">Paintbrush select</div>
<div class="abs" style="left:756.4px;top:320.5px;width:247.9px;height:1.2px;background:#8f96ad;"></div>
<div class="abs" style="left:756.4px;top:321.7px;width:247.9px;height:14.8px;background:#d9d9d9;"></div>
<div class="abs" style="left:756.4px;top:336.5px;width:247.9px;height:1.5px;background:#7e7e7e;"></div>
<svg class="abs" style="left:760.5px;top:327.5px" width="7" height="4" viewBox="0 0 7 4"><path d="M0 0H7L3.5 4Z" fill="#111"/></svg>
<div class="t" style="left:773.9px;top:326px;font-size:10.3px;color:#1a1a1a;letter-spacing:-0.627px;">Seismic interpretation</div>
<svg class="abs" style="left:993.9px;top:326.5px" width="6.6" height="6.6" viewBox="0 0 6.6 6.6"><path d="M1 1L5.6 5.6M5.6 1L1 5.6" stroke="#111" stroke-width="1.4"/></svg>
<div class="abs" style="left:756.4px;top:401.5px;width:247.9px;height:1.5px;background:#7e7e7e;"></div>
<div class="abs" style="left:756.4px;top:403px;width:247.9px;height:15.5px;background:#d9d9d9;"></div>
<div class="abs" style="left:756.4px;top:418.5px;width:247.9px;height:1.3px;background:#7e7e7e;"></div>
<svg class="abs" style="left:760.5px;top:409.3px" width="7" height="4" viewBox="0 0 7 4"><path d="M0 0H7L3.5 4Z" fill="#111"/></svg>
<div class="t" style="left:773.5px;top:407px;font-size:10.3px;color:#1a1a1a;letter-spacing:-0.571px;">Polygon editing</div>
<svg class="abs" style="left:994.2px;top:407.9px" width="6.6" height="6.6" viewBox="0 0 6.6 6.6"><path d="M1 1L5.6 5.6M5.6 1L1 5.6" stroke="#111" stroke-width="1.4"/></svg>
<div class="abs" style="left:873.2px;top:342px;width:1px;height:14px;background:#9a9a9a;"></div>
<div class="abs" style="left:898.6px;top:342px;width:1px;height:14px;background:#9a9a9a;"></div>
<div class="abs" style="left:943px;top:342px;width:1px;height:14px;background:#9a9a9a;"></div>
<div class="abs" style="left:987.5px;top:342px;width:1px;height:14px;background:#9a9a9a;"></div>
<div class="abs" style="left:907.5px;top:363px;width:1px;height:14px;background:#9a9a9a;"></div>
<div class="abs" style="left:955.4px;top:363px;width:1px;height:14px;background:#9a9a9a;"></div>
<svg class="abs" style="left:760px;top:342px" width="13.5" height="13.5" viewBox="0 0 13.5 13.5"><path d="M1.5 4.5L5.5 1.5L9 2.5L10 1H13V5.5H10L8.5 4.5L5 6.5Z" fill="#f5c518" stroke="#3a2a00" stroke-width=".7"/><rect x="10.5" y="1" width="2.6" height="4.6" fill="#1f7ad8"/><path d="M2.5 10.5H11" stroke="#3a78e0" stroke-width="2"/><circle cx="2.3" cy="10.5" r="1.7" fill="#fff" stroke="#c818c8" stroke-width="1.3"/><circle cx="11.2" cy="10.5" r="1.7" fill="#fff" stroke="#c818c8" stroke-width="1.3"/></svg>
<svg class="abs" style="left:776.1px;top:347.5px" width="5" height="3" viewBox="0 0 5 3"><path d="M0 0H5 L2.5 3Z" fill="#111"/></svg>
<svg class="abs" style="left:787.3px;top:342px" width="13.5" height="13.5" viewBox="0 0 13.5 13.5"><path d="M7 .8H11L9 4.5H11L6.5 10L7.5 6H5.5Z" fill="#9c9c9c"/><path d="M2.5 9.5Q6 7 10.5 11" fill="none" stroke="#a8a8a8" stroke-width="1.2"/><circle cx="2.2" cy="9.3" r="1.7" fill="#f2f2f2" stroke="#a8a8a8" stroke-width="1.1"/><circle cx="11" cy="11" r="1.7" fill="#f2f2f2" stroke="#a8a8a8" stroke-width="1.1"/></svg>
<svg class="abs" style="left:807px;top:342px" width="13.5" height="13.5" viewBox="0 0 13.5 13.5"><path d="M7 .8H11L9 4.5H11L6.5 10L7.5 6H5.5Z" fill="#9c9c9c"/><path d="M2.5 11Q7 10.5 9 7" fill="none" stroke="#a8a8a8" stroke-width="1.2"/><circle cx="2.2" cy="11" r="1.7" fill="#f2f2f2" stroke="#a8a8a8" stroke-width="1.1"/><path d="M5 11.5H10" stroke="#a8a8a8" stroke-width="1"/></svg>
<svg class="abs" style="left:826.5px;top:342px" width="13.5" height="13.5" viewBox="0 0 13.5 13.5"><path d="M2.5 7.5H11L13 13H.5Z" fill="#1f7ae0"/><path d="M7.5 .6H11.5L9.5 4H11.5L6.5 10L7.8 6H5.8Z" fill="#222"/><circle cx="5.3" cy="10.3" r="1.7" fill="#fff" stroke="#c818c8" stroke-width="1.2"/></svg>
<svg class="abs" style="left:846.3px;top:342px" width="13.5" height="13.5" viewBox="0 0 13.5 13.5"><rect x="2" y="2.5" width="10.5" height="9.5" fill="none" stroke="#222" stroke-width="1" stroke-dasharray="1.5 1.2"/><path d="M6.5 .6H10.5L8.5 4H10.5L5.5 10L6.8 6H4.8Z" fill="#222"/><circle cx="3.3" cy="11" r="1.7" fill="#fff" stroke="#c818c8" stroke-width="1.2"/><rect x="11.3" y="10.8" width="2" height="2" fill="#111"/><rect x="1" y="1.5" width="2" height="2" fill="#111"/></svg>
<svg class="abs" style="left:862.4px;top:347.5px" width="5" height="3" viewBox="0 0 5 3"><path d="M0 0H5 L2.5 3Z" fill="#111"/></svg>
<svg class="abs" style="left:878.8px;top:342px" width="14" height="13.5" viewBox="0 0 14 13.5"><path d="M4 5L7.5 2L10.5 2.8L11.5 1.5H13.3V6H11L9.5 5L6.5 7Z" fill="#f5c518" stroke="#3a2a00" stroke-width=".6"/><rect x="11.6" y="1.3" width="1.9" height="4.8" fill="#1f7ad8"/><path d="M2.8 3Q.8 7 2.8 11.5" fill="none" stroke="#c818c8" stroke-width="1.3"/><rect x=".8" y="2" width="3.4" height="10" fill="none" stroke="#222" stroke-width=".9"/><text x="8.5" y="13.2" font-family="Liberation Sans" font-weight="bold" font-size="7.5" fill="#111">F</text></svg>
<svg class="abs" style="left:904.3px;top:342px" width="14" height="13.5" viewBox="0 0 14 13.5"><path d="M1.5 3.5L7 10.5L12.5 3.5Q7 6 1.5 3.5Z" fill="#3a78e0" stroke="#1a3a9a" stroke-width=".8"/><path d="M4.5 4L7.5 2L10.5 2.8L11.5 1.5H13.3V6H11L9.5 5L6.5 7Z" fill="#f5c518" stroke="#3a2a00" stroke-width=".6"/><rect x="11.6" y="1.3" width="1.9" height="4.8" fill="#1f7ad8"/><g fill="#e81818"><rect x=".3" y="2.3" width="2" height="2"/><rect x="6" y="10.5" width="2" height="2"/><rect x="11.5" y="6.5" width="2" height="2"/><rect x="1.3" y="7.3" width="2" height="2"/></g><text x="4.5" y="9.5" font-family="Liberation Sans" font-weight="bold" font-size="5" fill="#fff">W</text></svg>
<svg class="abs" style="left:923.8px;top:342px" width="14" height="13.5" viewBox="0 0 14 13.5"><path d="M5.5 1.5Q2 6.5 5.5 12" fill="none" stroke="#1a48d8" stroke-width="1.5"/><path d="M1.5 2.5L5.5 1.5M1.5 10.5L5.5 12" stroke="#1a48d8" stroke-width="1.2"/><g fill="#e81818"><rect x=".3" y="1.3" width="2" height="2"/><rect x="4.6" y=".3" width="2" height="2"/><rect x=".3" y="9.6" width="2" height="2"/><rect x="4.6" y="11.2" width="2" height="2"/></g><path d="M10.5 2.5V11" stroke="#111" stroke-width="1.3"/><path d="M8.5 4.5L10.5 1.5L12.5 4.5ZM8.5 9L10.5 12L12.5 9Z" fill="#111"/></svg>
<svg class="abs" style="left:949px;top:342px" width="14" height="13.5" viewBox="0 0 14 13.5"><path d="M4 5L7.5 2L10.5 2.8L11.5 1.5H13.3V6H11L9.5 5L6.5 7Z" fill="#f5c518" stroke="#3a2a00" stroke-width=".6"/><rect x="11.6" y="1.3" width="1.9" height="4.8" fill="#1f7ad8"/><path d="M2.5 13L8.5 5" stroke="#1a4a8a" stroke-width="1.4"/><path d="M.5 2L4.5 4.5M9 8L13 10.5" stroke="#e81818" stroke-width="1" stroke-dasharray="2 1"/><text x="7" y="13.2" font-family="Liberation Sans" font-weight="bold" font-size="6" fill="#111">F</text></svg>
<svg class="abs" style="left:968.8px;top:342px" width="14" height="13.5" viewBox="0 0 14 13.5"><path d="M2.5 13L8.5 4.5" stroke="#1a4a8a" stroke-width="1.4"/><path d="M7 5L10 1.5L13 1L12.5 3.5L9 6.5Z" fill="#fff" stroke="#222" stroke-width=".8"/><path d="M.5 2.5L4.5 5M9 8.5L13 11" stroke="#e81818" stroke-width="1" stroke-dasharray="2 1"/><rect x="2.5" y="3.5" width="2.4" height="2" fill="#f5c518"/></svg>
<div class="abs" style="left:758.3px;top:361.2px;width:24.3px;height:17.5px;background:#fbd24e;border:1px solid #7a6420"></div>
<div class="abs" style="left:775px;top:362px;width:1px;height:16px;background:#9a7e28;"></div>
<svg class="abs" style="left:760.5px;top:362.8px" width="13.5" height="14" viewBox="0 0 13.5 14"><rect x=".8" y=".8" width="11.8" height="12.4" fill="none" stroke="#2a2000" stroke-width="1.3" stroke-dasharray="1.5 1.1"/><path d="M4.5 7.8L10.5 2.8V7.8Z" fill="#fff" stroke="#2a2a2a" stroke-width=".9"/><path d="M9 4L11.5 2" stroke="#555" stroke-width="1"/></svg>
<svg class="abs" style="left:776.5px;top:368.5px" width="5" height="3" viewBox="0 0 5 3"><path d="M0 0H5 L2.5 3Z" fill="#111"/></svg>
<svg class="abs" style="left:787.5px;top:363px" width="14" height="13.5" viewBox="0 0 14 13.5"><rect x=".8" y="1" width="8" height="8" rx="1" fill="#fff" stroke="#222" stroke-width="1.2"/><path d="M5.5 6L13 11.5M13 5Q8.5 8.75 6.625 12.5" fill="none" stroke="#d81010" stroke-width="1.7"/></svg>
<svg class="abs" style="left:808.5px;top:363px" width="12" height="13.5" viewBox="0 0 12 13.5"><path d="M0.8 3.5L10.3 11M10.3 2.5Q4.6 7.25 2.225 12" fill="none" stroke="#d81010" stroke-width="1.7"/></svg>
<svg class="abs" style="left:827.5px;top:363px" width="14" height="14" viewBox="0 0 14 14"><path d="M3.5 2V12" stroke="#111" stroke-width="1.2" stroke-dasharray="2 1.5"/><rect x="2" y=".5" width="3" height="3" fill="#111"/><rect x="2" y="10.5" width="3" height="3" fill="#111"/><rect x="2" y="5.5" width="3" height="3" fill="#e81010"/><path d="M6 5L9.5 1.8L13 1.2L12.5 3.5L9 5.5Z" fill="#fff" stroke="#222" stroke-width=".8"/></svg>
<svg class="abs" style="left:848.7px;top:363px" width="13" height="14" viewBox="0 0 13 14"><path d="M2 6L6.5 3L10.5 5.5L8.5 10.5L4.5 11.5Z" fill="none" stroke="#1a3ac8" stroke-width="1.2"/><rect x=".8" y="4.8" width="2.4" height="2.4" fill="#e81010"/><rect x="3.3" y="10.3" width="2" height="2" fill="#111"/><rect x="7.5" y="9.5" width="2" height="2" fill="#111"/><path d="M5 4.5L8.5 1.2L12 .8L11.5 3L8 5Z" fill="#fff" stroke="#222" stroke-width=".8"/></svg>
<svg class="abs" style="left:867px;top:363px" width="14" height="14" viewBox="0 0 14 14"><path d="M1 1L11.5 12.5" stroke="#1a58d8" stroke-width="1.5"/><path d="M3 9L10 3M3.5 4.5L9 8" stroke="#777" stroke-width="1"/><circle cx="10.8" cy="5" r="1.6" fill="none" stroke="#1a58d8" stroke-width="1.3"/><circle cx="11" cy="9" r="1.6" fill="none" stroke="#1a58d8" stroke-width="1.3"/></svg>
<svg class="abs" style="left:887.5px;top:363px" width="14" height="14" viewBox="0 0 14 14"><path d="M1 1L9 12.5" stroke="#a8a8a8" stroke-width="1.2" stroke-dasharray="3 1.5"/><path d="M8.5 3.5H13M10.8 1.3V5.8M8.5 9.5H13M10.8 7.3V11.8" stroke="#8a8a8a" stroke-width="1.1"/></svg>
<svg class="abs" style="left:913.5px;top:363px" width="14" height="14" viewBox="0 0 14 14"><path d="M2 11V7.5Q2.5 3.5 7.5 3.5Q12.5 3.5 12.8 8H10.3Q10 5.8 7.5 5.8Q5 5.8 4.6 8H6.5L3.3 11.5L.3 8H2" fill="#1f9ae0" stroke="#0a3a7a" stroke-width=".8"/></svg>
<svg class="abs" style="left:935.5px;top:363px" width="14" height="14" viewBox="0 0 14 14"><path d="M12 11V7.5Q11.5 3.5 6.5 3.5Q1.5 3.5 1.2 8H3.7Q4 5.8 6.5 5.8Q9 5.8 9.4 8H7.5L10.7 11.5L13.7 8H12" fill="#c4c4c4" stroke="#9a9a9a" stroke-width=".8"/></svg>
<svg class="abs" style="left:961px;top:363px" width="14.5" height="14" viewBox="0 0 14.5 14"><path d="M.5 7.5Q5 6 8 8T13 12.5" fill="none" stroke="#b81020" stroke-width="2.2"/><path d="M5.5 6.5L9 2.5L12.5 1.5L12 4L8.5 7" fill="#fff" stroke="#222" stroke-width=".8"/></svg>
<svg class="abs" style="left:981px;top:363px" width="14" height="14" viewBox="0 0 14 14"><path d="M.5 8H12M4 1.5V13" stroke="#b4b4b4" stroke-width="2"/><path d="M6 6L9.5 2.5L13 1.5L12.5 4L9 6.5" fill="#f4f4f4" stroke="#9a9a9a" stroke-width=".8"/></svg>
<svg class="abs" style="left:760px;top:384.5px" width="14" height="14" viewBox="0 0 14 14"><path d="M3 12.5L6.5 2.5M6.5 2.5L13 6" stroke="#f05a10" stroke-width="2"/><path d="M.5 4H3.5" stroke="#111" stroke-width="1" stroke-dasharray="1 1"/><path d="M6.5 1V3" stroke="#111" stroke-width="1"/><path d="M6.5 4.5V12L8.5 10.2L10 13.3L11.5 12.6L10 9.5H12.5Z" fill="#fff" stroke="#222" stroke-width=".9"/></svg>
<svg class="abs" style="left:778.8px;top:384.5px" width="14" height="14" viewBox="0 0 14 14"><path d="M2.5 13V2L12 6L5 8L12.5 12.5" fill="none" stroke="#f05a10" stroke-width="2.3" stroke-linejoin="miter"/></svg>
<svg class="abs" style="left:795.5px;top:390px" width="5" height="3" viewBox="0 0 5 3"><path d="M0 0H5 L2.5 3Z" fill="#111"/></svg>
<svg class="abs" style="left:807px;top:384.5px" width="14" height="14" viewBox="0 0 14 14"><path d="M1 3L5 1V10L1 12ZM5 1L9 3V12L5 10ZM9 3L13 1V10L9 12Z" fill="#dadada" stroke="#c4c4c4" stroke-width=".7"/><path d="M9.5 8H13.5M11.5 6V10" stroke="#fff" stroke-width="2"/><path d="M9.5 8H13.5M11.5 6V10" stroke="#cfcfcf" stroke-width="1"/></svg>
<svg class="abs" style="left:823.3px;top:390px" width="5" height="3" viewBox="0 0 5 3"><path d="M0 0H5 L2.5 3Z" fill="#8a8a8a"/></svg>
<svg class="abs" style="left:834.5px;top:384.5px" width="14" height="14" viewBox="0 0 14 14"><path d="M1 8H6V11H13V13.5H1Z" fill="#c8c8c8" stroke="#b0b0b0" stroke-width=".8"/><path d="M5 1L9 8M9 1L5 8" stroke="#b0b0b0" stroke-width="1.1"/><circle cx="4.5" cy="8.5" r="1.4" fill="none" stroke="#b0b0b0" stroke-width="1"/><circle cx="9.5" cy="8.5" r="1.4" fill="none" stroke="#b0b0b0" stroke-width="1"/></svg>
<svg class="abs" style="left:853.8px;top:384.5px" width="14" height="14" viewBox="0 0 14 14"><path d="M3 2Q7 -.5 11 2Q14 5 11.5 9Q12 12.5 8 13Q4 13.5 3 10Q0 6 3 2Z" fill="#e4e4e4" stroke="#cfcfcf" stroke-width=".9"/><circle cx="8.5" cy="6" r="1.3" fill="#f4f4f4" stroke="#c8c8c8" stroke-width=".7"/><circle cx="7.5" cy="10.5" r="1.3" fill="#f4f4f4" stroke="#c8c8c8" stroke-width=".7"/></svg>
<svg class="abs" style="left:870.1px;top:390px" width="5" height="3" viewBox="0 0 5 3"><path d="M0 0H5 L2.5 3Z" fill="#8a8a8a"/></svg>
<svg class="abs" style="left:881.3px;top:384.5px" width="14" height="14" viewBox="0 0 14 14"><path d="M2 2.5L5 7.5L11.5 9.5M5 7.5L2 11L8 12.5" fill="none" stroke="#c81818" stroke-width=".9"/><g fill="#e81010"><rect x=".5" y="1" width="2.6" height="2.6"/><rect x="10.5" y="8" width="2.6" height="2.6"/></g><rect x="3.8" y="6.3" width="2.4" height="2.4" fill="#f5c518" stroke="#5a4a00" stroke-width=".5"/><path d="M1.5 10.5Q4 13 8.5 12.5" fill="none" stroke="#555" stroke-width="1.2" stroke-dasharray="1.5 .8"/><path d="M5.5 5L9 1.8L12.5 1.2L12 3.5L8.5 5.8Z" fill="#fff" stroke="#222" stroke-width=".8"/></svg>
<svg class="abs" style="left:901px;top:384.2px" width="13.5" height="13.5" viewBox="0 0 13.5 13.5"><rect x=".7" y=".7" width="12.1" height="12.1" rx="1" fill="#fafafa" stroke="#5a5a5a" stroke-width="1.4"/><rect x="2.2" y="2.5" width="3" height="2" fill="#e82020"/><rect x="5.2" y="2.5" width="2.6" height="2" fill="#28c8d8"/><rect x="7.8" y="2.5" width="3.5" height="2" fill="#2888e8"/><rect x="2.2" y="5.5" width="3.4" height="2" fill="#e82020"/><rect x="5.6" y="5.5" width="2.6" height="2" fill="#58c828"/><rect x="8.2" y="5.5" width="3.1" height="2" fill="#e8e020"/><rect x="2.2" y="8.5" width="3" height="2.2" fill="#2858e8"/><rect x="5.2" y="8.5" width="2.6" height="2.2" fill="#f08818"/><rect x="7.8" y="8.5" width="3.5" height="2.2" fill="#f0c818"/></svg>
<svg class="abs" style="left:760.2px;top:423px" width="14" height="14" viewBox="0 0 14 14"><path d="M2 2.5L5 7.5L11.5 9.5M5 7.5L2 11L8 12.5" fill="none" stroke="#c81818" stroke-width=".9"/><g fill="#e81010"><rect x=".5" y="1" width="2.6" height="2.6"/><rect x="10.5" y="8" width="2.6" height="2.6"/></g><rect x="3.8" y="6.3" width="2.4" height="2.4" fill="#f5c518" stroke="#5a4a00" stroke-width=".5"/><path d="M1.5 10.5Q4 13 8.5 12.5" fill="none" stroke="#555" stroke-width="1.2" stroke-dasharray="1.5 .8"/><path d="M5.5 5L9 1.8L12.5 1.2L12 3.5L8.5 5.8Z" fill="#fff" stroke="#222" stroke-width=".8"/></svg>
<svg class="abs" style="left:779px;top:423px" width="14.5" height="14" viewBox="0 0 14.5 14"><rect x=".8" y=".8" width="12.6" height="12.4" fill="none" stroke="#111" stroke-width="1.3" stroke-dasharray="1.5 1.1"/><path d="M5 8L11 3V8Z" fill="#fff" stroke="#2a2a2a" stroke-width=".9"/><path d="M9.5 4.2L12 2.2" stroke="#555" stroke-width="1"/></svg>
<svg class="abs" style="left:799.5px;top:423px" width="13.5" height="13.5" viewBox="0 0 13.5 13.5"><rect x=".8" y="1" width="8" height="8" rx="1" fill="#fff" stroke="#222" stroke-width="1.2"/><path d="M5 6L12.5 11.5M12.5 5Q8 8.75 6.125 12.5" fill="none" stroke="#d81010" stroke-width="1.7"/></svg>
<div class="abs" style="left:816px;top:421.3px;width:17.8px;height:17.6px;background:#fde39a;border:1px solid #d8a838"></div>
<svg class="abs" style="left:818px;top:423.3px" width="14" height="14" viewBox="0 0 14 14"><circle cx="4.3" cy="9" r="3.3" fill="#f8a010" stroke="#c87808" stroke-width=".7"/><rect x="8" y="1" width="4.6" height="4.6" rx=".8" fill="#fce838" stroke="#a89018" stroke-width=".9"/></svg>
<svg class="abs" style="left:837.8px;top:423px" width="14" height="14" viewBox="0 0 14 14"><path d="M2 11.5H11" stroke="#b8b8b8" stroke-width="1.3"/><circle cx="2.3" cy="11.5" r="1.6" fill="#f2f2f2" stroke="#a8a8a8" stroke-width="1"/><circle cx="11" cy="11.5" r="1.6" fill="#f2f2f2" stroke="#a8a8a8" stroke-width="1"/><path d="M4 9L9 3L11.5 1.5L12.5 2.5L11 5L5.5 10Z" fill="#dcdcdc" stroke="#9a9a9a" stroke-width=".8"/></svg>
<svg class="abs" style="left:857px;top:423px" width="14" height="14" viewBox="0 0 14 14"><path d="M1 1L11.5 12.5" stroke="#1a58d8" stroke-width="1.5"/><path d="M3 9L10 3M3.5 4.5L9 8" stroke="#555" stroke-width="1"/><circle cx="10.8" cy="5" r="1.6" fill="none" stroke="#1a58d8" stroke-width="1.3"/><circle cx="11" cy="9" r="1.6" fill="none" stroke="#1a58d8" stroke-width="1.3"/></svg>
<div class="t" style="left:876.3px;top:425px;font-size:12px;color:#111;font-weight:bold;letter-spacing:-0.138px;">Z=</div>
<div class="abs" style="left:825px;top:441.5px;width:179.8px;height:114.3px;background:#e9ebeb;border:1px solid #d0d3d3"></div>
<div class="t" style="left:829.7px;top:448px;font-size:10.3px;color:#555;font-weight:bold;letter-spacing:-0.258px;">Add points to polygon</div>
<div class="t" style="left:829.7px;top:464px;font-size:10.3px;color:#686868;letter-spacing:-0.192px;">Draw a new polygon, or add points to</div>
<div class="t" style="left:829.7px;top:477px;font-size:10.3px;color:#686868;letter-spacing:-0.264px;">the selected polygon.</div>
<div class="t" style="left:829.7px;top:503px;font-size:10.3px;color:#686868;letter-spacing:-0.286px;">Actions</div>
<div class="t" style="left:829.7px;top:516px;font-size:10.3px;color:#686868;letter-spacing:-0.095px;">- N = start new polygon</div>
<div class="t" style="left:829.7px;top:529px;font-size:10.3px;color:#686868;letter-spacing:-0.203px;">- Double click = close and start new</div>
<div class="t" style="left:829.7px;top:542px;font-size:10.3px;color:#686868;letter-spacing:-0.085px;">- Shift = insert into open polygon</div>
<div class="t" style="left:37.0px;top:835px;font-size:16px;color:#f0f0f0;letter-spacing:-0.164px;-webkit-text-stroke:0;">25000m</div>
<div class="t" style="left:37.0px;top:868px;font-size:16px;color:#f0f0f0;letter-spacing:-0.105px;-webkit-text-stroke:0;">1:479840</div>
<svg class="abs" style="left:19.5px;top:839.5px" width="164" height="22" viewBox="0 0 164 22"><path d="M1.5 1.5H5.5V15.5H158.5V1.5H162.5V20.5H1.5Z" fill="none" stroke="#e8e8e8" stroke-width="1.3"/><path d="M3.5 18H160.5" stroke="#bdbdbd" stroke-width="1.6"/></svg>
</body>
</html>
